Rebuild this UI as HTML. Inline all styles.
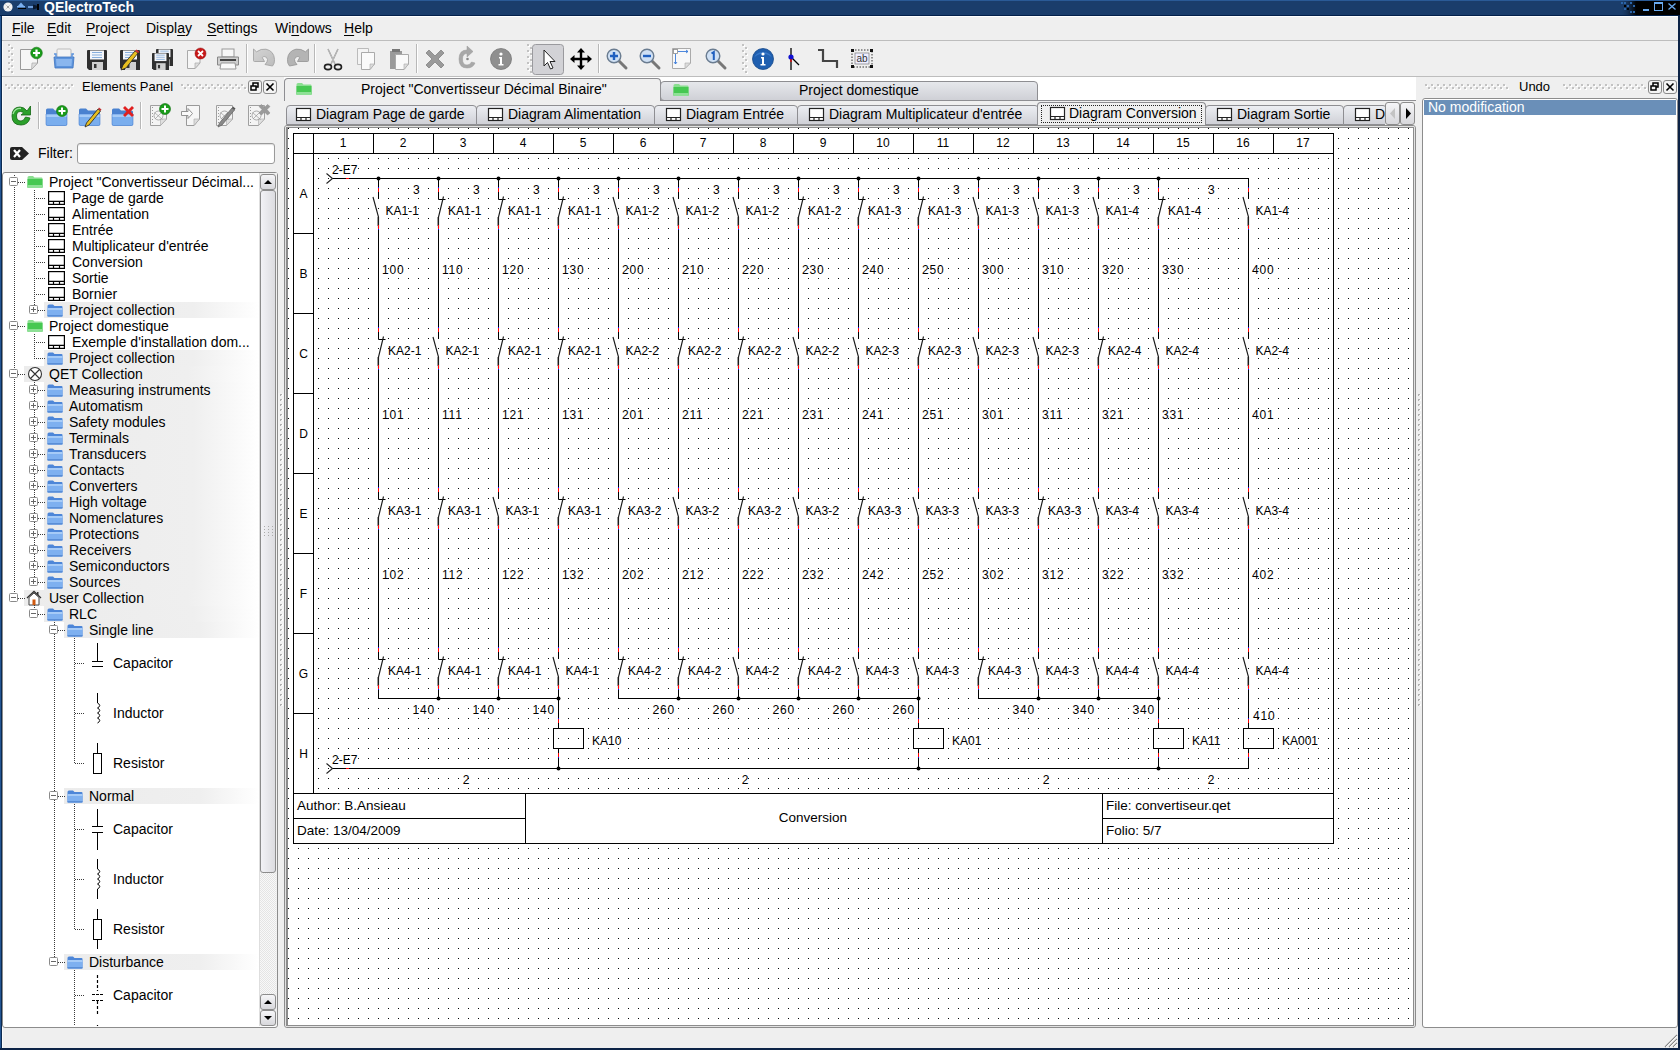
<!DOCTYPE html>
<html><head><meta charset="utf-8">
<style>
*{box-sizing:border-box}
html,body{margin:0;padding:0}
body{width:1680px;height:1050px;overflow:hidden;position:relative;background:#efefef;font-family:"Liberation Sans",sans-serif;font-size:14px;color:#000}
.a{position:absolute}
.t{position:absolute;white-space:nowrap;line-height:16px}
svg{position:absolute;overflow:visible}
.ul{text-decoration:underline;text-underline-offset:2px}
</style></head><body>
<div class="a" style="left:0px;top:0px;width:1680px;height:16px;background:#1a3d6b;border-top:1px solid #2a5a96;border-bottom:1px solid #03204a"></div><div class="a" style="left:0px;top:16px;width:1px;height:1034px;background:#245694"></div><div class="a" style="left:1px;top:16px;width:1px;height:1034px;background:#0c2a50"></div><div class="a" style="left:2px;top:41px;width:1px;height:1007px;background:#fbfbfb"></div><div class="a" style="left:1678px;top:16px;width:2px;height:1034px;background:#0c2346"></div><div class="a" style="left:0px;top:1048px;width:1680px;height:2px;background:#0c2346"></div><div class="t" style="left:44px;top:-1px;font-size:14px;color:#fff;font-weight:bold;">QElectroTech</div><svg style="left:0;top:0" width="60" height="16">
<circle cx="8" cy="7" r="4.6" fill="#f2f2f2"/>
<circle cx="8" cy="7" r="1" fill="#888"/><path d="M5.5 4.5 L6.8 5.8 M10.5 4.5 L9.2 5.8 M5.5 9.5 L6.8 8.2 M10.5 9.5 L9.2 8.2" stroke="#bbb" stroke-width="0.8"/>
<path d="M17.5 6.5 L21 2.5 L24.5 6.5 Z" fill="#7ab0f0"/><rect x="17" y="6" width="8" height="1.5" fill="#7ab0f0"/><rect x="18" y="8" width="8" height="1" fill="#000"/>
<rect x="28" y="6" width="5" height="2" fill="#6a9ad8"/><path d="M33 4.5 L38 6 V8 L33 9.5 Z" fill="#0a1a30"/><rect x="37" y="4" width="2" height="6" fill="#000"/>
</svg><svg style="left:1610px;top:0" width="70" height="16">
<defs><linearGradient id="tbg" x1="0" x2="1" y1="0" y2="0"><stop offset="0" stop-color="#1a3d6b" stop-opacity="0"/><stop offset="1" stop-color="#000"/></linearGradient></defs>
<rect x="10" y="1" width="16" height="14" fill="url(#tbg)"/>
<rect x="26" y="1" width="44" height="14" fill="#000"/>
<rect x="11" y="2" width="2" height="2" fill="#2a64a8"/><rect x="14" y="2" width="2" height="2" fill="#2a64a8"/><rect x="20" y="2" width="2" height="2" fill="#2a64a8"/>
<rect x="17" y="5" width="2" height="2" fill="#2a64a8"/><rect x="23" y="5" width="2" height="2" fill="#2a64a8"/><rect x="14" y="8" width="2" height="2" fill="#2a64a8"/>
<rect x="20" y="11" width="2" height="2" fill="#2a64a8"/><rect x="23" y="11" width="2" height="2" fill="#2a64a8"/><rect x="14" y="5" width="2" height="2" fill="#000"/><rect x="17" y="8" width="2" height="2" fill="#000"/>
<rect x="33" y="9" width="6" height="2" fill="#6aaaf0"/>
<rect x="44.5" y="2.5" width="8" height="8" fill="none" stroke="#6aaaf0" stroke-width="1"/><rect x="44" y="2" width="9" height="2" fill="#6aaaf0"/>
<path d="M58.5 3.5 L65.5 9.5 M65.5 3.5 L58.5 9.5" stroke="#6aaaf0" stroke-width="1.3"/>
</svg><div class="a" style="left:2px;top:16px;width:1676px;height:1px;background:#fff"></div><div class="a" style="left:2px;top:40px;width:1676px;height:1px;background:#bdbdbd"></div><div class="t" style="left:12px;top:20px;font-size:14px;color:#000;font-weight:normal;"><span class="ul">F</span>ile</div><div class="t" style="left:47px;top:20px;font-size:14px;color:#000;font-weight:normal;"><span class="ul">E</span>dit</div><div class="t" style="left:86px;top:20px;font-size:14px;color:#000;font-weight:normal;"><span class="ul">P</span>roject</div><div class="t" style="left:146px;top:20px;font-size:14px;color:#000;font-weight:normal;">Displ<span class="ul">a</span>y</div><div class="t" style="left:207px;top:20px;font-size:14px;color:#000;font-weight:normal;"><span class="ul">S</span>ettings</div><div class="t" style="left:275px;top:20px;font-size:14px;color:#000;font-weight:normal;">Wi<span class="ul">n</span>dows</div><div class="t" style="left:344px;top:20px;font-size:14px;color:#000;font-weight:normal;"><span class="ul">H</span>elp</div><div class="a" style="left:2px;top:76px;width:1676px;height:1px;background:#bdbdbd"></div><svg style="left:0;top:0" width="900" height="80"><g transform="translate(8,44)"><rect x="1" y="1" width="2" height="2" fill="#fff"/><rect x="0" y="0" width="2" height="2" fill="#c2c2c2"/><rect x="4" y="4" width="2" height="2" fill="#fff"/><rect x="3" y="3" width="2" height="2" fill="#c2c2c2"/><rect x="1" y="7" width="2" height="2" fill="#fff"/><rect x="0" y="6" width="2" height="2" fill="#c2c2c2"/><rect x="4" y="10" width="2" height="2" fill="#fff"/><rect x="3" y="9" width="2" height="2" fill="#c2c2c2"/><rect x="1" y="13" width="2" height="2" fill="#fff"/><rect x="0" y="12" width="2" height="2" fill="#c2c2c2"/><rect x="4" y="16" width="2" height="2" fill="#fff"/><rect x="3" y="15" width="2" height="2" fill="#c2c2c2"/><rect x="1" y="19" width="2" height="2" fill="#fff"/><rect x="0" y="18" width="2" height="2" fill="#c2c2c2"/><rect x="4" y="22" width="2" height="2" fill="#fff"/><rect x="3" y="21" width="2" height="2" fill="#c2c2c2"/><rect x="1" y="25" width="2" height="2" fill="#fff"/><rect x="0" y="24" width="2" height="2" fill="#c2c2c2"/><rect x="4" y="28" width="2" height="2" fill="#fff"/><rect x="3" y="27" width="2" height="2" fill="#c2c2c2"/></g><g transform="translate(527,44)"><rect x="1" y="1" width="2" height="2" fill="#fff"/><rect x="0" y="0" width="2" height="2" fill="#c2c2c2"/><rect x="4" y="4" width="2" height="2" fill="#fff"/><rect x="3" y="3" width="2" height="2" fill="#c2c2c2"/><rect x="1" y="7" width="2" height="2" fill="#fff"/><rect x="0" y="6" width="2" height="2" fill="#c2c2c2"/><rect x="4" y="10" width="2" height="2" fill="#fff"/><rect x="3" y="9" width="2" height="2" fill="#c2c2c2"/><rect x="1" y="13" width="2" height="2" fill="#fff"/><rect x="0" y="12" width="2" height="2" fill="#c2c2c2"/><rect x="4" y="16" width="2" height="2" fill="#fff"/><rect x="3" y="15" width="2" height="2" fill="#c2c2c2"/><rect x="1" y="19" width="2" height="2" fill="#fff"/><rect x="0" y="18" width="2" height="2" fill="#c2c2c2"/><rect x="4" y="22" width="2" height="2" fill="#fff"/><rect x="3" y="21" width="2" height="2" fill="#c2c2c2"/><rect x="1" y="25" width="2" height="2" fill="#fff"/><rect x="0" y="24" width="2" height="2" fill="#c2c2c2"/><rect x="4" y="28" width="2" height="2" fill="#fff"/><rect x="3" y="27" width="2" height="2" fill="#c2c2c2"/></g><g transform="translate(742,44)"><rect x="1" y="1" width="2" height="2" fill="#fff"/><rect x="0" y="0" width="2" height="2" fill="#c2c2c2"/><rect x="4" y="4" width="2" height="2" fill="#fff"/><rect x="3" y="3" width="2" height="2" fill="#c2c2c2"/><rect x="1" y="7" width="2" height="2" fill="#fff"/><rect x="0" y="6" width="2" height="2" fill="#c2c2c2"/><rect x="4" y="10" width="2" height="2" fill="#fff"/><rect x="3" y="9" width="2" height="2" fill="#c2c2c2"/><rect x="1" y="13" width="2" height="2" fill="#fff"/><rect x="0" y="12" width="2" height="2" fill="#c2c2c2"/><rect x="4" y="16" width="2" height="2" fill="#fff"/><rect x="3" y="15" width="2" height="2" fill="#c2c2c2"/><rect x="1" y="19" width="2" height="2" fill="#fff"/><rect x="0" y="18" width="2" height="2" fill="#c2c2c2"/><rect x="4" y="22" width="2" height="2" fill="#fff"/><rect x="3" y="21" width="2" height="2" fill="#c2c2c2"/><rect x="1" y="25" width="2" height="2" fill="#fff"/><rect x="0" y="24" width="2" height="2" fill="#c2c2c2"/><rect x="4" y="28" width="2" height="2" fill="#fff"/><rect x="3" y="27" width="2" height="2" fill="#c2c2c2"/></g><rect x="246" y="44" width="1" height="29" fill="#b8b8b8"/><rect x="247" y="44" width="1" height="29" fill="#fff"/><rect x="314" y="44" width="1" height="29" fill="#b8b8b8"/><rect x="315" y="44" width="1" height="29" fill="#fff"/><rect x="416" y="44" width="1" height="29" fill="#b8b8b8"/><rect x="417" y="44" width="1" height="29" fill="#fff"/><rect x="598" y="44" width="1" height="29" fill="#b8b8b8"/><rect x="599" y="44" width="1" height="29" fill="#fff"/><rect x="532.5" y="44.5" width="31" height="30" rx="3" fill="#d2d2d6" stroke="#9a9a9e"/><g transform="translate(19,47)"><path d="M1.5 2.5 H15 L18.5 6 V16 L12.5 22.5 H1.5 Z" fill="#f6f6f6" stroke="#999"/><path d="M12.5 22.5 L18.5 16 H13 Z" fill="#ddd" stroke="#aaa" stroke-width="0.7"/><circle cx="17.5" cy="6" r="5.8" fill="#1a9c1a" stroke="#0d6e0d" stroke-width="0.6"/><path d="M17.5 2.5 V9.5 M14 6 H21" stroke="#fff" stroke-width="2.2"/></g><g transform="translate(52,47)"><rect x="5" y="2" width="14" height="10" rx="1" fill="#f4f4f4" stroke="#bbb"/><path d="M2 10 H22 L21 21 H3 Z" fill="#5d94dc" stroke="#3f74bf" stroke-width="0.8"/><path d="M4 12 H20 L19.5 19 H4.5 Z" fill="#8ab6ee"/><path d="M2 7 H4 V12 M22 7 H20 V12" stroke="#5d94dc" stroke-width="1.5" fill="none"/></g><g transform="translate(85,47)"><g transform="translate(2,3) scale(1.0,1.0)"><path d="M0 1 Q0 0 1 0 H19 Q20 0 20 1 V20 H2 L0 18 Z" fill="#303030"/><rect x="3" y="0.5" width="14" height="9" fill="#f4f6fa"/><path d="M5 2.5 H15 M5 5 H15 M5 7.5 H15" stroke="#7aa6d8" stroke-width="0.9"/><rect x="5" y="12" width="11" height="8" fill="#d0d0d0"/><rect x="7" y="14" width="2.5" height="4" fill="#333"/></g></g><g transform="translate(118,47)"><g transform="translate(2,3) scale(1.0,1.0)"><path d="M0 1 Q0 0 1 0 H19 Q20 0 20 1 V20 H2 L0 18 Z" fill="#303030"/><rect x="3" y="0.5" width="14" height="9" fill="#f4f6fa"/><path d="M5 2.5 H15 M5 5 H15 M5 7.5 H15" stroke="#7aa6d8" stroke-width="0.9"/><rect x="5" y="12" width="11" height="8" fill="#d0d0d0"/><rect x="7" y="14" width="2.5" height="4" fill="#333"/></g><path d="M3 23 L5 18 L17 4 L20 6 L8 21 Z" fill="#e8c020" stroke="#222" stroke-width="0.8"/><path d="M17 4 L18.5 2.5 L21.5 5 L20 6 Z" fill="#d03030"/></g><g transform="translate(151,47)"><g transform="translate(5,2) scale(0.85,0.85)"><path d="M0 1 Q0 0 1 0 H19 Q20 0 20 1 V20 H2 L0 18 Z" fill="#303030"/><rect x="3" y="0.5" width="14" height="9" fill="#f4f6fa"/><path d="M5 2.5 H15 M5 5 H15 M5 7.5 H15" stroke="#7aa6d8" stroke-width="0.9"/><rect x="5" y="12" width="11" height="8" fill="#d0d0d0"/><rect x="7" y="14" width="2.5" height="4" fill="#333"/></g><g transform="translate(1,6) scale(0.85,0.85)"><path d="M0 1 Q0 0 1 0 H19 Q20 0 20 1 V20 H2 L0 18 Z" fill="#303030"/><rect x="3" y="0.5" width="14" height="9" fill="#f4f6fa"/><path d="M5 2.5 H15 M5 5 H15 M5 7.5 H15" stroke="#7aa6d8" stroke-width="0.9"/><rect x="5" y="12" width="11" height="8" fill="#d0d0d0"/><rect x="7" y="14" width="2.5" height="4" fill="#333"/></g></g><g transform="translate(185,47)"><path d="M2.5 3.5 H15 V16 L10 21.5 H2.5 Z" fill="#f6f6f6" stroke="#aaa"/><path d="M10 21.5 L15 16 H10 Z" fill="#ddd" stroke="#aaa" stroke-width="0.7"/><circle cx="15.5" cy="6.5" r="5.5" fill="#c81818" stroke="#8a0a0a" stroke-width="0.5"/><path d="M13 4 L18 9 M18 4 L13 9" stroke="#fff" stroke-width="1.8"/></g><g transform="translate(216,47)"><rect x="6" y="2" width="12" height="8" fill="#f8f8f8" stroke="#999"/><path d="M1.5 10 H22.5 V18 H1.5 Z" fill="#cfcfcf" stroke="#888"/><rect x="4" y="12" width="16" height="2" fill="#444"/><path d="M5 16 H19 L20 22 H4 Z" fill="#fafafa" stroke="#999"/></g><g transform="translate(252,47)"><defs><linearGradient id="ug" x1="0" y1="0" x2="1" y2="1"><stop offset="0" stop-color="#d4d4d4"/><stop offset="1" stop-color="#bcbcbc"/></linearGradient></defs><path d="M1.5 2 L4.5 4.8 Q9 1.5 14 2.2 Q22 4 22.5 12.5 Q22.8 16.5 20.5 19 L13 17.5 Q15.8 15 15.5 12.5 Q15 9.5 12.2 9.5 Q11 9.6 10.3 10.6 L12.5 14.5 H2.5 Q1.5 14.5 1.5 13.5 Z" fill="url(#ug)" stroke="#a4a4a4" stroke-width="0.9"/></g><g transform="translate(286,47)"><g transform="translate(24,0) scale(-1,1)"><path d="M1.5 2 L4.5 4.8 Q9 1.5 14 2.2 Q22 4 22.5 12.5 Q22.8 16.5 20.5 19 L13 17.5 Q15.8 15 15.5 12.5 Q15 9.5 12.2 9.5 Q11 9.6 10.3 10.6 L12.5 14.5 H2.5 Q1.5 14.5 1.5 13.5 Z" fill="#b4b4b4" stroke="#999" stroke-width="0.9"/></g></g><g transform="translate(321,48)"><path d="M7 1 L14 16 M17 1 L10 16" stroke="#888" stroke-width="1.4" fill="none"/><path d="M7 1 L14 16 M17 1 L10 16" stroke="#eee" stroke-width="0.5" fill="none"/><ellipse cx="7" cy="19" rx="3.5" ry="2.6" fill="none" stroke="#222" stroke-width="1.6"/><ellipse cx="17" cy="19" rx="3.5" ry="2.6" fill="none" stroke="#222" stroke-width="1.6"/></g><g transform="translate(355,47)"><path d="M2.5 1.5 H13.5 V17.5 H2.5 Z" fill="#f4f4f4" stroke="#bbb"/><path d="M6.5 5.5 H19.5 V17 L15 22.5 H6.5 Z" fill="#fafafa" stroke="#aaa"/><path d="M15 22.5 L19.5 17 H15 Z" fill="#ddd" stroke="#aaa" stroke-width="0.6"/></g><g transform="translate(388,47)"><path d="M2 4 H14 V22 H2 Z" fill="#9a9a9a"/><rect x="4" y="2" width="8" height="3" fill="#777"/><path d="M7.5 7.5 H20.5 V17 L16 22.5 H7.5 Z" fill="#fafafa" stroke="#aaa"/><path d="M16 22.5 L20.5 17 H16 Z" fill="#ddd" stroke="#aaa" stroke-width="0.6"/></g><g transform="translate(423,47)"><path d="M3 6 L6 3 L12 9 L18 3 L21 6 L15 12 L21 18 L18 21 L12 15 L6 21 L3 18 L9 12 Z" fill="#9a9a9a" stroke="#7a7a7a" stroke-width="0.7"/></g><g transform="translate(455,47)"><path d="M12 3 Q4 3 4 12 Q4 21 12 21 Q18 21 20 16 L16.5 15 Q15 18 12 18 Q7.5 18 7.5 12 Q7.5 6.5 12 6.5 L12 10 L18 4.5 L12 -1 Z" fill="#a8a8a8" stroke="#999" stroke-width="0.5"/><circle cx="12.5" cy="12" r="1.3" fill="#888"/></g><g transform="translate(489,47)"><circle cx="12" cy="12" r="10.5" fill="#8f8f8f" stroke="#777" stroke-width="0.8"/><circle cx="12" cy="7" r="1.6" fill="#fff"/><path d="M10 10 H13 V17 H14.5 V18.5 H9.5 V17 H11 V11.5 H10 Z" fill="#fff"/></g><g transform="translate(536,47)"><path d="M8 3 V19 L11.5 15.5 L14.5 22 L17 21 L14 14.5 L19 14.5 Z" fill="#fff" stroke="#222" stroke-width="1"/></g><g transform="translate(569,47)"><path d="M12 1 L16 5.5 H13.2 V10.8 H18.5 V8 L23 12 L18.5 16 V13.2 H13.2 V18.5 H16 L12 23 L8 18.5 H10.8 V13.2 H5.5 V16 L1 12 L5.5 8 V10.8 H10.8 V5.5 H8 Z" fill="#000"/></g><g transform="translate(605,47)"><path d="M13 13 L21 21" stroke="#777" stroke-width="3" stroke-linecap="round"/><circle cx="9" cy="9" r="6.8" fill="#cfe0f4" stroke="#6a7c90" stroke-width="1.4"/><path d="M9 5 V13 M5 9 H13" stroke="#2060c0" stroke-width="2.4"/></g><g transform="translate(638,47)"><path d="M13 13 L21 21" stroke="#777" stroke-width="3" stroke-linecap="round"/><circle cx="9" cy="9" r="6.8" fill="#cfe0f4" stroke="#6a7c90" stroke-width="1.4"/><path d="M5 9 H13" stroke="#2060c0" stroke-width="2.4"/></g><g transform="translate(671,47)"><path d="M1.5 1.5 H19.5 V16 L14 21.5 H1.5 Z" fill="#f8f8f8" stroke="#aaa"/><path d="M14 21.5 L19.5 16 H14 Z" fill="#ddd" stroke="#aaa" stroke-width="0.6"/><rect x="2.5" y="2.5" width="4" height="4" fill="#fff" stroke="#888" stroke-width="0.8"/><path d="M7 4.5 H17 M15 3 L17 4.5 L15 6 M4.5 7 V17 M3 15 L4.5 17 L6 15" stroke="#3a7ad8" stroke-width="0.9" fill="none"/></g><g transform="translate(704,47)"><path d="M13 13 L21 21" stroke="#777" stroke-width="3" stroke-linecap="round"/><circle cx="9" cy="9" r="6.8" fill="#cfe0f4" stroke="#6a7c90" stroke-width="1.4"/><path d="M7.5 6.5 L9.8 5 V13" stroke="#2060c0" stroke-width="2" fill="none"/></g><g transform="translate(751,47)"><circle cx="12" cy="12" r="10.5" fill="#1f5fb0" stroke="#184a8a" stroke-width="0.8"/><path d="M3 12 A9 7 0 0 1 21 12 A9 5 0 0 0 3 12" fill="#4a88d8" opacity="0.6"/><circle cx="12" cy="7" r="1.6" fill="#fff"/><path d="M10 10 H13 V17 H14.5 V18.5 H9.5 V17 H11 V11.5 H10 Z" fill="#fff"/></g><g transform="translate(784,47)"><path d="M7 1 V23" stroke="#000" stroke-width="1.3"/><path d="M7 10 L15 18" stroke="#000" stroke-width="1.3"/><circle cx="7" cy="10" r="2.6" fill="#1010d0"/><path d="M7 12 V15" stroke="#e00" stroke-width="1.3"/></g><g transform="translate(817,47)"><path d="M1 3 H6 V14 H20 V21" stroke="#444" stroke-width="2.2" fill="none"/></g><g transform="translate(850,47)"><rect x="2" y="3" width="20" height="17" fill="none" stroke="#333" stroke-width="1" stroke-dasharray="1.5,1.5"/><rect x="1" y="2" width="3" height="3" fill="#111"/><rect x="20" y="2" width="3" height="3" fill="#111"/><rect x="1" y="18" width="3" height="3" fill="#111"/><rect x="20" y="18" width="3" height="3" fill="#111"/><rect x="5" y="6" width="14" height="11" fill="#eef" stroke="#666" stroke-width="0.6"/><text x="12" y="15" font-family="Liberation Sans" font-size="10" text-anchor="middle" fill="#333">ab</text></g></svg><svg style="left:0;top:0" width="290" height="175"><rect x="6" y="85" width="2" height="2" fill="#fff"/><rect x="5" y="84" width="2" height="2" fill="#c2c2c2"/><rect x="9" y="88" width="2" height="2" fill="#fff"/><rect x="8" y="87" width="2" height="2" fill="#c2c2c2"/><rect x="12" y="85" width="2" height="2" fill="#fff"/><rect x="11" y="84" width="2" height="2" fill="#c2c2c2"/><rect x="15" y="88" width="2" height="2" fill="#fff"/><rect x="14" y="87" width="2" height="2" fill="#c2c2c2"/><rect x="18" y="85" width="2" height="2" fill="#fff"/><rect x="17" y="84" width="2" height="2" fill="#c2c2c2"/><rect x="21" y="88" width="2" height="2" fill="#fff"/><rect x="20" y="87" width="2" height="2" fill="#c2c2c2"/><rect x="24" y="85" width="2" height="2" fill="#fff"/><rect x="23" y="84" width="2" height="2" fill="#c2c2c2"/><rect x="27" y="88" width="2" height="2" fill="#fff"/><rect x="26" y="87" width="2" height="2" fill="#c2c2c2"/><rect x="30" y="85" width="2" height="2" fill="#fff"/><rect x="29" y="84" width="2" height="2" fill="#c2c2c2"/><rect x="33" y="88" width="2" height="2" fill="#fff"/><rect x="32" y="87" width="2" height="2" fill="#c2c2c2"/><rect x="36" y="85" width="2" height="2" fill="#fff"/><rect x="35" y="84" width="2" height="2" fill="#c2c2c2"/><rect x="39" y="88" width="2" height="2" fill="#fff"/><rect x="38" y="87" width="2" height="2" fill="#c2c2c2"/><rect x="42" y="85" width="2" height="2" fill="#fff"/><rect x="41" y="84" width="2" height="2" fill="#c2c2c2"/><rect x="45" y="88" width="2" height="2" fill="#fff"/><rect x="44" y="87" width="2" height="2" fill="#c2c2c2"/><rect x="48" y="85" width="2" height="2" fill="#fff"/><rect x="47" y="84" width="2" height="2" fill="#c2c2c2"/><rect x="51" y="88" width="2" height="2" fill="#fff"/><rect x="50" y="87" width="2" height="2" fill="#c2c2c2"/><rect x="54" y="85" width="2" height="2" fill="#fff"/><rect x="53" y="84" width="2" height="2" fill="#c2c2c2"/><rect x="57" y="88" width="2" height="2" fill="#fff"/><rect x="56" y="87" width="2" height="2" fill="#c2c2c2"/><rect x="60" y="85" width="2" height="2" fill="#fff"/><rect x="59" y="84" width="2" height="2" fill="#c2c2c2"/><rect x="63" y="88" width="2" height="2" fill="#fff"/><rect x="62" y="87" width="2" height="2" fill="#c2c2c2"/><rect x="66" y="85" width="2" height="2" fill="#fff"/><rect x="65" y="84" width="2" height="2" fill="#c2c2c2"/><rect x="69" y="88" width="2" height="2" fill="#fff"/><rect x="68" y="87" width="2" height="2" fill="#c2c2c2"/><rect x="72" y="85" width="2" height="2" fill="#fff"/><rect x="71" y="84" width="2" height="2" fill="#c2c2c2"/><rect x="182" y="85" width="2" height="2" fill="#fff"/><rect x="181" y="84" width="2" height="2" fill="#c2c2c2"/><rect x="185" y="88" width="2" height="2" fill="#fff"/><rect x="184" y="87" width="2" height="2" fill="#c2c2c2"/><rect x="188" y="85" width="2" height="2" fill="#fff"/><rect x="187" y="84" width="2" height="2" fill="#c2c2c2"/><rect x="191" y="88" width="2" height="2" fill="#fff"/><rect x="190" y="87" width="2" height="2" fill="#c2c2c2"/><rect x="194" y="85" width="2" height="2" fill="#fff"/><rect x="193" y="84" width="2" height="2" fill="#c2c2c2"/><rect x="197" y="88" width="2" height="2" fill="#fff"/><rect x="196" y="87" width="2" height="2" fill="#c2c2c2"/><rect x="200" y="85" width="2" height="2" fill="#fff"/><rect x="199" y="84" width="2" height="2" fill="#c2c2c2"/><rect x="203" y="88" width="2" height="2" fill="#fff"/><rect x="202" y="87" width="2" height="2" fill="#c2c2c2"/><rect x="206" y="85" width="2" height="2" fill="#fff"/><rect x="205" y="84" width="2" height="2" fill="#c2c2c2"/><rect x="209" y="88" width="2" height="2" fill="#fff"/><rect x="208" y="87" width="2" height="2" fill="#c2c2c2"/><rect x="212" y="85" width="2" height="2" fill="#fff"/><rect x="211" y="84" width="2" height="2" fill="#c2c2c2"/><rect x="215" y="88" width="2" height="2" fill="#fff"/><rect x="214" y="87" width="2" height="2" fill="#c2c2c2"/><rect x="218" y="85" width="2" height="2" fill="#fff"/><rect x="217" y="84" width="2" height="2" fill="#c2c2c2"/><rect x="221" y="88" width="2" height="2" fill="#fff"/><rect x="220" y="87" width="2" height="2" fill="#c2c2c2"/><rect x="224" y="85" width="2" height="2" fill="#fff"/><rect x="223" y="84" width="2" height="2" fill="#c2c2c2"/><rect x="227" y="88" width="2" height="2" fill="#fff"/><rect x="226" y="87" width="2" height="2" fill="#c2c2c2"/><rect x="230" y="85" width="2" height="2" fill="#fff"/><rect x="229" y="84" width="2" height="2" fill="#c2c2c2"/><rect x="233" y="88" width="2" height="2" fill="#fff"/><rect x="232" y="87" width="2" height="2" fill="#c2c2c2"/><rect x="236" y="85" width="2" height="2" fill="#fff"/><rect x="235" y="84" width="2" height="2" fill="#c2c2c2"/><rect x="239" y="88" width="2" height="2" fill="#fff"/><rect x="238" y="87" width="2" height="2" fill="#c2c2c2"/><rect x="242" y="85" width="2" height="2" fill="#fff"/><rect x="241" y="84" width="2" height="2" fill="#c2c2c2"/><rect x="245" y="88" width="2" height="2" fill="#fff"/><rect x="244" y="87" width="2" height="2" fill="#c2c2c2"/><g transform="translate(248,80)"><rect x="0.5" y="0.5" width="13" height="13" rx="2.5" fill="#f4f4f4" stroke="#8a8a8a"/><rect x="5" y="3" width="5" height="4" fill="none" stroke="#000" stroke-width="1.5"/><rect x="3" y="6" width="5" height="4" fill="#f4f4f4" stroke="#000" stroke-width="1.5"/></g><g transform="translate(263,80)"><rect x="0.5" y="0.5" width="13" height="13" rx="2.5" fill="#f4f4f4" stroke="#8a8a8a"/><path d="M3.5 3.5 L10.5 10.5 M10.5 3.5 L3.5 10.5" stroke="#000" stroke-width="1.6"/></g><g transform="translate(9,104)"><path d="M18 7 Q15 3 11 3 Q3 3 3 12 Q3 21 12 21 Q19 21 21 14 L16.5 13 Q15 17 12 17 Q7.5 17 7.5 12 Q7.5 7.5 11.5 7.5 Q13.5 7.5 14.5 9 L12 11 H21.5 V2 Z" fill="#2aa02a" stroke="#116611" stroke-width="0.8"/><path d="M4 10 Q6 4 12 4.5" stroke="#9fe39f" stroke-width="1.3" fill="none"/></g><rect x="38" y="102" width="1" height="27" fill="#b8b8b8"/><rect x="39" y="102" width="1" height="27" fill="#fff"/><g transform="translate(45,104)"><path d="M1 6 Q1 4.5 2.5 4.5 H8 L10 6.5 H20.5 Q22 6.5 22 8 V20 Q22 21.5 20.5 21.5 H2.5 Q1 21.5 1 20 Z" fill="#4a82d0"/><path d="M1 10 H22 V20 Q22 21.5 20.5 21.5 H2.5 Q1 21.5 1 20 Z" fill="#7aaeee" stroke="#4a82d0" stroke-width="0.6"/><path d="M1.5 10.5 H21.5 V13 H1.5 Z" fill="#a6cbf7"/><circle cx="17" cy="7" r="5.5" fill="#1a9c1a" stroke="#0d6e0d" stroke-width="0.6"/><path d="M17 3.5 V10.5 M13.5 7 H20.5" stroke="#fff" stroke-width="2"/></g><g transform="translate(78,104)"><path d="M1 6 Q1 4.5 2.5 4.5 H8 L10 6.5 H20.5 Q22 6.5 22 8 V20 Q22 21.5 20.5 21.5 H2.5 Q1 21.5 1 20 Z" fill="#4a82d0"/><path d="M1 10 H22 V20 Q22 21.5 20.5 21.5 H2.5 Q1 21.5 1 20 Z" fill="#7aaeee" stroke="#4a82d0" stroke-width="0.6"/><path d="M1.5 10.5 H21.5 V13 H1.5 Z" fill="#a6cbf7"/><path d="M7 23 L8.5 19 L20 5 L22.5 7 L11 21 Z" fill="#e8c020" stroke="#222" stroke-width="0.8"/><path d="M20 5 L21 3.5 L23.5 5.5 L22.5 7 Z" fill="#c03030"/></g><g transform="translate(111,104)"><path d="M1 6 Q1 4.5 2.5 4.5 H8 L10 6.5 H20.5 Q22 6.5 22 8 V20 Q22 21.5 20.5 21.5 H2.5 Q1 21.5 1 20 Z" fill="#4a82d0"/><path d="M1 10 H22 V20 Q22 21.5 20.5 21.5 H2.5 Q1 21.5 1 20 Z" fill="#7aaeee" stroke="#4a82d0" stroke-width="0.6"/><path d="M1.5 10.5 H21.5 V13 H1.5 Z" fill="#a6cbf7"/><path d="M14 2 L17.5 5.5 L21 2 L23 4 L19.5 7.5 L23 11 L21 13 L17.5 9.5 L14 13 L12 11 L15.5 7.5 L12 4 Z" fill="#e02020"/></g><rect x="140" y="102" width="1" height="27" fill="#b8b8b8"/><rect x="141" y="102" width="1" height="27" fill="#fff"/><g transform="translate(149,104)"><path d="M1.5 1.5 H17.5 V15 L11.5 21.5 H1.5 Z" fill="#f4f4f4" stroke="#a0a0a0"/><path d="M11.5 21.5 L17.5 15 H11.5 Z" fill="#e0e0e0" stroke="#aaa" stroke-width="0.6"/><path d="M3.5 3 V20" stroke="#999" stroke-dasharray="1,2"/><circle cx="9.5" cy="11.5" r="4.5" fill="none" stroke="#999" stroke-width="0.8"/><path d="M5.5 8.5 L13.5 15.5 M6 15 L13 8" stroke="#999" stroke-width="0.7"/><circle cx="16" cy="5" r="5.5" fill="#1a9c1a" stroke="#0d6e0d" stroke-width="0.6"/><path d="M16 1.5 V8.5 M12.5 5 H19.5" stroke="#fff" stroke-width="2"/></g><g transform="translate(180,104)"><path d="M6.5 1.5 H19.5 V15 L14 21.5 H6.5 Z" fill="#f6f6f6" stroke="#999"/><path d="M14 21.5 L19.5 15 H14 Z" fill="#ddd" stroke="#aaa" stroke-width="0.6"/><path d="M1.5 7.5 H8 V4.5 L12.5 9.5 L8 14.5 V11.5 H1.5 Z" fill="#fafafa" stroke="#888" stroke-width="0.9"/></g><g transform="translate(215,104)"><path d="M1.5 1.5 H17.5 V15 L11.5 21.5 H1.5 Z" fill="#f4f4f4" stroke="#a0a0a0"/><path d="M11.5 21.5 L17.5 15 H11.5 Z" fill="#e0e0e0" stroke="#aaa" stroke-width="0.6"/><path d="M3.5 3 V20" stroke="#999" stroke-dasharray="1,2"/><circle cx="9.5" cy="11.5" r="4.5" fill="none" stroke="#999" stroke-width="0.8"/><path d="M5.5 8.5 L13.5 15.5 M6 15 L13 8" stroke="#999" stroke-width="0.7"/><path d="M3 23 L4.5 19 L17 4 L19.5 6 L7 21 Z" fill="#8a8a8a" stroke="#666" stroke-width="0.8"/><path d="M17 4 L18 2.5 L20.5 4.5 L19.5 6 Z" fill="#555"/></g><g transform="translate(247,104)"><path d="M1.5 1.5 H17.5 V15 L11.5 21.5 H1.5 Z" fill="#f4f4f4" stroke="#a0a0a0"/><path d="M11.5 21.5 L17.5 15 H11.5 Z" fill="#e0e0e0" stroke="#aaa" stroke-width="0.6"/><path d="M3.5 3 V20" stroke="#999" stroke-dasharray="1,2"/><circle cx="9.5" cy="11.5" r="4.5" fill="none" stroke="#999" stroke-width="0.8"/><path d="M5.5 8.5 L13.5 15.5 M6 15 L13 8" stroke="#999" stroke-width="0.7"/><path d="M12 2.5 L14.5 0.5 L17.5 3.5 L20.5 0.5 L23 2.5 L20 5.5 L23 9 L20.5 11 L17.5 8 L14.5 11 L12 9 L15 5.5 Z" fill="#9a9a9a" stroke="#888" stroke-width="0.5"/></g><g transform="translate(9,146)"><path d="M1 3 Q1 1 3 1 H13 L20 7.5 L13 14 H3 Q1 14 1 12 Z" fill="#222"/><path d="M5 4 L11 11 M11 4 L5 11" stroke="#fff" stroke-width="2.2"/></g></svg><div class="t" style="left:82px;top:79px;font-size:13px;color:#000;font-weight:normal;">Elements Panel</div><div class="t" style="left:38px;top:145px;font-size:14px;color:#000;font-weight:normal;">Filter:</div><div class="a" style="left:77px;top:143px;width:198px;height:21px;background:#fff;border:1px solid #9a9a9a;border-radius:3px;box-shadow:inset 0 1px 1px #ddd"></div><div class="a" style="left:2px;top:172px;width:276px;height:856px;background:#fff;border:1px solid #8c8c8c;border-radius:3px"></div><div class="a" style="left:278px;top:393px;width:6px;height:313px;background:#f3f3f3"></div><svg style="left:278px;top:393px" width="6" height="313"><rect x="2" y="1" width="2" height="1" fill="#b0b0b0"/><rect x="2" y="2" width="1" height="1" fill="#b0b0b0"/><rect x="4" y="1" width="1" height="2" fill="#fff"/><rect x="2" y="6" width="2" height="1" fill="#b0b0b0"/><rect x="2" y="7" width="1" height="1" fill="#b0b0b0"/><rect x="4" y="6" width="1" height="2" fill="#fff"/><rect x="2" y="11" width="2" height="1" fill="#b0b0b0"/><rect x="2" y="12" width="1" height="1" fill="#b0b0b0"/><rect x="4" y="11" width="1" height="2" fill="#fff"/><rect x="2" y="16" width="2" height="1" fill="#b0b0b0"/><rect x="2" y="17" width="1" height="1" fill="#b0b0b0"/><rect x="4" y="16" width="1" height="2" fill="#fff"/><rect x="2" y="21" width="2" height="1" fill="#b0b0b0"/><rect x="2" y="22" width="1" height="1" fill="#b0b0b0"/><rect x="4" y="21" width="1" height="2" fill="#fff"/><rect x="2" y="26" width="2" height="1" fill="#b0b0b0"/><rect x="2" y="27" width="1" height="1" fill="#b0b0b0"/><rect x="4" y="26" width="1" height="2" fill="#fff"/><rect x="2" y="31" width="2" height="1" fill="#b0b0b0"/><rect x="2" y="32" width="1" height="1" fill="#b0b0b0"/><rect x="4" y="31" width="1" height="2" fill="#fff"/><rect x="2" y="36" width="2" height="1" fill="#b0b0b0"/><rect x="2" y="37" width="1" height="1" fill="#b0b0b0"/><rect x="4" y="36" width="1" height="2" fill="#fff"/><rect x="2" y="41" width="2" height="1" fill="#b0b0b0"/><rect x="2" y="42" width="1" height="1" fill="#b0b0b0"/><rect x="4" y="41" width="1" height="2" fill="#fff"/><rect x="2" y="46" width="2" height="1" fill="#b0b0b0"/><rect x="2" y="47" width="1" height="1" fill="#b0b0b0"/><rect x="4" y="46" width="1" height="2" fill="#fff"/><rect x="2" y="51" width="2" height="1" fill="#b0b0b0"/><rect x="2" y="52" width="1" height="1" fill="#b0b0b0"/><rect x="4" y="51" width="1" height="2" fill="#fff"/><rect x="2" y="56" width="2" height="1" fill="#b0b0b0"/><rect x="2" y="57" width="1" height="1" fill="#b0b0b0"/><rect x="4" y="56" width="1" height="2" fill="#fff"/><rect x="2" y="61" width="2" height="1" fill="#b0b0b0"/><rect x="2" y="62" width="1" height="1" fill="#b0b0b0"/><rect x="4" y="61" width="1" height="2" fill="#fff"/><rect x="2" y="66" width="2" height="1" fill="#b0b0b0"/><rect x="2" y="67" width="1" height="1" fill="#b0b0b0"/><rect x="4" y="66" width="1" height="2" fill="#fff"/><rect x="2" y="71" width="2" height="1" fill="#b0b0b0"/><rect x="2" y="72" width="1" height="1" fill="#b0b0b0"/><rect x="4" y="71" width="1" height="2" fill="#fff"/><rect x="2" y="76" width="2" height="1" fill="#b0b0b0"/><rect x="2" y="77" width="1" height="1" fill="#b0b0b0"/><rect x="4" y="76" width="1" height="2" fill="#fff"/><rect x="2" y="81" width="2" height="1" fill="#b0b0b0"/><rect x="2" y="82" width="1" height="1" fill="#b0b0b0"/><rect x="4" y="81" width="1" height="2" fill="#fff"/><rect x="2" y="86" width="2" height="1" fill="#b0b0b0"/><rect x="2" y="87" width="1" height="1" fill="#b0b0b0"/><rect x="4" y="86" width="1" height="2" fill="#fff"/><rect x="2" y="91" width="2" height="1" fill="#b0b0b0"/><rect x="2" y="92" width="1" height="1" fill="#b0b0b0"/><rect x="4" y="91" width="1" height="2" fill="#fff"/><rect x="2" y="96" width="2" height="1" fill="#b0b0b0"/><rect x="2" y="97" width="1" height="1" fill="#b0b0b0"/><rect x="4" y="96" width="1" height="2" fill="#fff"/><rect x="2" y="101" width="2" height="1" fill="#b0b0b0"/><rect x="2" y="102" width="1" height="1" fill="#b0b0b0"/><rect x="4" y="101" width="1" height="2" fill="#fff"/><rect x="2" y="106" width="2" height="1" fill="#b0b0b0"/><rect x="2" y="107" width="1" height="1" fill="#b0b0b0"/><rect x="4" y="106" width="1" height="2" fill="#fff"/><rect x="2" y="111" width="2" height="1" fill="#b0b0b0"/><rect x="2" y="112" width="1" height="1" fill="#b0b0b0"/><rect x="4" y="111" width="1" height="2" fill="#fff"/><rect x="2" y="116" width="2" height="1" fill="#b0b0b0"/><rect x="2" y="117" width="1" height="1" fill="#b0b0b0"/><rect x="4" y="116" width="1" height="2" fill="#fff"/><rect x="2" y="121" width="2" height="1" fill="#b0b0b0"/><rect x="2" y="122" width="1" height="1" fill="#b0b0b0"/><rect x="4" y="121" width="1" height="2" fill="#fff"/><rect x="2" y="126" width="2" height="1" fill="#b0b0b0"/><rect x="2" y="127" width="1" height="1" fill="#b0b0b0"/><rect x="4" y="126" width="1" height="2" fill="#fff"/><rect x="2" y="131" width="2" height="1" fill="#b0b0b0"/><rect x="2" y="132" width="1" height="1" fill="#b0b0b0"/><rect x="4" y="131" width="1" height="2" fill="#fff"/><rect x="2" y="136" width="2" height="1" fill="#b0b0b0"/><rect x="2" y="137" width="1" height="1" fill="#b0b0b0"/><rect x="4" y="136" width="1" height="2" fill="#fff"/><rect x="2" y="141" width="2" height="1" fill="#b0b0b0"/><rect x="2" y="142" width="1" height="1" fill="#b0b0b0"/><rect x="4" y="141" width="1" height="2" fill="#fff"/><rect x="2" y="146" width="2" height="1" fill="#b0b0b0"/><rect x="2" y="147" width="1" height="1" fill="#b0b0b0"/><rect x="4" y="146" width="1" height="2" fill="#fff"/><rect x="2" y="151" width="2" height="1" fill="#b0b0b0"/><rect x="2" y="152" width="1" height="1" fill="#b0b0b0"/><rect x="4" y="151" width="1" height="2" fill="#fff"/><rect x="2" y="156" width="2" height="1" fill="#b0b0b0"/><rect x="2" y="157" width="1" height="1" fill="#b0b0b0"/><rect x="4" y="156" width="1" height="2" fill="#fff"/><rect x="2" y="161" width="2" height="1" fill="#b0b0b0"/><rect x="2" y="162" width="1" height="1" fill="#b0b0b0"/><rect x="4" y="161" width="1" height="2" fill="#fff"/><rect x="2" y="166" width="2" height="1" fill="#b0b0b0"/><rect x="2" y="167" width="1" height="1" fill="#b0b0b0"/><rect x="4" y="166" width="1" height="2" fill="#fff"/><rect x="2" y="171" width="2" height="1" fill="#b0b0b0"/><rect x="2" y="172" width="1" height="1" fill="#b0b0b0"/><rect x="4" y="171" width="1" height="2" fill="#fff"/><rect x="2" y="176" width="2" height="1" fill="#b0b0b0"/><rect x="2" y="177" width="1" height="1" fill="#b0b0b0"/><rect x="4" y="176" width="1" height="2" fill="#fff"/><rect x="2" y="181" width="2" height="1" fill="#b0b0b0"/><rect x="2" y="182" width="1" height="1" fill="#b0b0b0"/><rect x="4" y="181" width="1" height="2" fill="#fff"/><rect x="2" y="186" width="2" height="1" fill="#b0b0b0"/><rect x="2" y="187" width="1" height="1" fill="#b0b0b0"/><rect x="4" y="186" width="1" height="2" fill="#fff"/><rect x="2" y="191" width="2" height="1" fill="#b0b0b0"/><rect x="2" y="192" width="1" height="1" fill="#b0b0b0"/><rect x="4" y="191" width="1" height="2" fill="#fff"/><rect x="2" y="196" width="2" height="1" fill="#b0b0b0"/><rect x="2" y="197" width="1" height="1" fill="#b0b0b0"/><rect x="4" y="196" width="1" height="2" fill="#fff"/><rect x="2" y="201" width="2" height="1" fill="#b0b0b0"/><rect x="2" y="202" width="1" height="1" fill="#b0b0b0"/><rect x="4" y="201" width="1" height="2" fill="#fff"/><rect x="2" y="206" width="2" height="1" fill="#b0b0b0"/><rect x="2" y="207" width="1" height="1" fill="#b0b0b0"/><rect x="4" y="206" width="1" height="2" fill="#fff"/><rect x="2" y="211" width="2" height="1" fill="#b0b0b0"/><rect x="2" y="212" width="1" height="1" fill="#b0b0b0"/><rect x="4" y="211" width="1" height="2" fill="#fff"/><rect x="2" y="216" width="2" height="1" fill="#b0b0b0"/><rect x="2" y="217" width="1" height="1" fill="#b0b0b0"/><rect x="4" y="216" width="1" height="2" fill="#fff"/><rect x="2" y="221" width="2" height="1" fill="#b0b0b0"/><rect x="2" y="222" width="1" height="1" fill="#b0b0b0"/><rect x="4" y="221" width="1" height="2" fill="#fff"/><rect x="2" y="226" width="2" height="1" fill="#b0b0b0"/><rect x="2" y="227" width="1" height="1" fill="#b0b0b0"/><rect x="4" y="226" width="1" height="2" fill="#fff"/><rect x="2" y="231" width="2" height="1" fill="#b0b0b0"/><rect x="2" y="232" width="1" height="1" fill="#b0b0b0"/><rect x="4" y="231" width="1" height="2" fill="#fff"/><rect x="2" y="236" width="2" height="1" fill="#b0b0b0"/><rect x="2" y="237" width="1" height="1" fill="#b0b0b0"/><rect x="4" y="236" width="1" height="2" fill="#fff"/><rect x="2" y="241" width="2" height="1" fill="#b0b0b0"/><rect x="2" y="242" width="1" height="1" fill="#b0b0b0"/><rect x="4" y="241" width="1" height="2" fill="#fff"/><rect x="2" y="246" width="2" height="1" fill="#b0b0b0"/><rect x="2" y="247" width="1" height="1" fill="#b0b0b0"/><rect x="4" y="246" width="1" height="2" fill="#fff"/><rect x="2" y="251" width="2" height="1" fill="#b0b0b0"/><rect x="2" y="252" width="1" height="1" fill="#b0b0b0"/><rect x="4" y="251" width="1" height="2" fill="#fff"/><rect x="2" y="256" width="2" height="1" fill="#b0b0b0"/><rect x="2" y="257" width="1" height="1" fill="#b0b0b0"/><rect x="4" y="256" width="1" height="2" fill="#fff"/><rect x="2" y="261" width="2" height="1" fill="#b0b0b0"/><rect x="2" y="262" width="1" height="1" fill="#b0b0b0"/><rect x="4" y="261" width="1" height="2" fill="#fff"/><rect x="2" y="266" width="2" height="1" fill="#b0b0b0"/><rect x="2" y="267" width="1" height="1" fill="#b0b0b0"/><rect x="4" y="266" width="1" height="2" fill="#fff"/><rect x="2" y="271" width="2" height="1" fill="#b0b0b0"/><rect x="2" y="272" width="1" height="1" fill="#b0b0b0"/><rect x="4" y="271" width="1" height="2" fill="#fff"/><rect x="2" y="276" width="2" height="1" fill="#b0b0b0"/><rect x="2" y="277" width="1" height="1" fill="#b0b0b0"/><rect x="4" y="276" width="1" height="2" fill="#fff"/><rect x="2" y="281" width="2" height="1" fill="#b0b0b0"/><rect x="2" y="282" width="1" height="1" fill="#b0b0b0"/><rect x="4" y="281" width="1" height="2" fill="#fff"/><rect x="2" y="286" width="2" height="1" fill="#b0b0b0"/><rect x="2" y="287" width="1" height="1" fill="#b0b0b0"/><rect x="4" y="286" width="1" height="2" fill="#fff"/><rect x="2" y="291" width="2" height="1" fill="#b0b0b0"/><rect x="2" y="292" width="1" height="1" fill="#b0b0b0"/><rect x="4" y="291" width="1" height="2" fill="#fff"/><rect x="2" y="296" width="2" height="1" fill="#b0b0b0"/><rect x="2" y="297" width="1" height="1" fill="#b0b0b0"/><rect x="4" y="296" width="1" height="2" fill="#fff"/><rect x="2" y="301" width="2" height="1" fill="#b0b0b0"/><rect x="2" y="302" width="1" height="1" fill="#b0b0b0"/><rect x="4" y="301" width="1" height="2" fill="#fff"/><rect x="2" y="306" width="2" height="1" fill="#b0b0b0"/><rect x="2" y="307" width="1" height="1" fill="#b0b0b0"/><rect x="4" y="306" width="1" height="2" fill="#fff"/><rect x="2" y="311" width="2" height="1" fill="#b0b0b0"/><rect x="2" y="312" width="1" height="1" fill="#b0b0b0"/><rect x="4" y="311" width="1" height="2" fill="#fff"/></svg><div class="a" style="left:44px;top:302px;width:215px;height:16px;background:linear-gradient(to right,#ececec 0%,#efefef 70%,#ffffff 100%)"></div><div class="a" style="left:44px;top:350px;width:215px;height:16px;background:linear-gradient(to right,#ececec 0%,#efefef 70%,#ffffff 100%)"></div><div class="a" style="left:24px;top:366px;width:235px;height:16px;background:linear-gradient(to right,#ececec 0%,#efefef 70%,#ffffff 100%)"></div><div class="a" style="left:44px;top:382px;width:215px;height:16px;background:linear-gradient(to right,#ececec 0%,#efefef 70%,#ffffff 100%)"></div><div class="a" style="left:44px;top:398px;width:215px;height:16px;background:linear-gradient(to right,#ececec 0%,#efefef 70%,#ffffff 100%)"></div><div class="a" style="left:44px;top:414px;width:215px;height:16px;background:linear-gradient(to right,#ececec 0%,#efefef 70%,#ffffff 100%)"></div><div class="a" style="left:44px;top:430px;width:215px;height:16px;background:linear-gradient(to right,#ececec 0%,#efefef 70%,#ffffff 100%)"></div><div class="a" style="left:44px;top:446px;width:215px;height:16px;background:linear-gradient(to right,#ececec 0%,#efefef 70%,#ffffff 100%)"></div><div class="a" style="left:44px;top:462px;width:215px;height:16px;background:linear-gradient(to right,#ececec 0%,#efefef 70%,#ffffff 100%)"></div><div class="a" style="left:44px;top:478px;width:215px;height:16px;background:linear-gradient(to right,#ececec 0%,#efefef 70%,#ffffff 100%)"></div><div class="a" style="left:44px;top:494px;width:215px;height:16px;background:linear-gradient(to right,#ececec 0%,#efefef 70%,#ffffff 100%)"></div><div class="a" style="left:44px;top:510px;width:215px;height:16px;background:linear-gradient(to right,#ececec 0%,#efefef 70%,#ffffff 100%)"></div><div class="a" style="left:44px;top:526px;width:215px;height:16px;background:linear-gradient(to right,#ececec 0%,#efefef 70%,#ffffff 100%)"></div><div class="a" style="left:44px;top:542px;width:215px;height:16px;background:linear-gradient(to right,#ececec 0%,#efefef 70%,#ffffff 100%)"></div><div class="a" style="left:44px;top:558px;width:215px;height:16px;background:linear-gradient(to right,#ececec 0%,#efefef 70%,#ffffff 100%)"></div><div class="a" style="left:44px;top:574px;width:215px;height:16px;background:linear-gradient(to right,#ececec 0%,#efefef 70%,#ffffff 100%)"></div><div class="a" style="left:24px;top:590px;width:235px;height:16px;background:linear-gradient(to right,#ececec 0%,#efefef 70%,#ffffff 100%)"></div><div class="a" style="left:44px;top:606px;width:215px;height:16px;background:linear-gradient(to right,#ececec 0%,#efefef 70%,#ffffff 100%)"></div><div class="a" style="left:64px;top:622px;width:195px;height:16px;background:linear-gradient(to right,#ececec 0%,#efefef 70%,#ffffff 100%)"></div><div class="a" style="left:64px;top:788px;width:195px;height:16px;background:linear-gradient(to right,#ececec 0%,#efefef 70%,#ffffff 100%)"></div><div class="a" style="left:64px;top:954px;width:195px;height:16px;background:linear-gradient(to right,#ececec 0%,#efefef 70%,#ffffff 100%)"></div><div class="t" style="left:49px;top:174px;font-size:14px;color:#000;font-weight:normal;">Project "Convertisseur Décimal...</div><div class="t" style="left:72px;top:190px;font-size:14px;color:#000;font-weight:normal;">Page de garde</div><div class="t" style="left:72px;top:206px;font-size:14px;color:#000;font-weight:normal;">Alimentation</div><div class="t" style="left:72px;top:222px;font-size:14px;color:#000;font-weight:normal;">Entrée</div><div class="t" style="left:72px;top:238px;font-size:14px;color:#000;font-weight:normal;">Multiplicateur d'entrée</div><div class="t" style="left:72px;top:254px;font-size:14px;color:#000;font-weight:normal;">Conversion</div><div class="t" style="left:72px;top:270px;font-size:14px;color:#000;font-weight:normal;">Sortie</div><div class="t" style="left:72px;top:286px;font-size:14px;color:#000;font-weight:normal;">Bornier</div><div class="t" style="left:69px;top:302px;font-size:14px;color:#000;font-weight:normal;">Project collection</div><div class="t" style="left:49px;top:318px;font-size:14px;color:#000;font-weight:normal;">Project domestique</div><div class="t" style="left:72px;top:334px;font-size:14px;color:#000;font-weight:normal;">Exemple d'installation dom...</div><div class="t" style="left:69px;top:350px;font-size:14px;color:#000;font-weight:normal;">Project collection</div><div class="t" style="left:49px;top:366px;font-size:14px;color:#000;font-weight:normal;">QET Collection</div><div class="t" style="left:69px;top:382px;font-size:14px;color:#000;font-weight:normal;">Measuring instruments</div><div class="t" style="left:69px;top:398px;font-size:14px;color:#000;font-weight:normal;">Automatism</div><div class="t" style="left:69px;top:414px;font-size:14px;color:#000;font-weight:normal;">Safety modules</div><div class="t" style="left:69px;top:430px;font-size:14px;color:#000;font-weight:normal;">Terminals</div><div class="t" style="left:69px;top:446px;font-size:14px;color:#000;font-weight:normal;">Transducers</div><div class="t" style="left:69px;top:462px;font-size:14px;color:#000;font-weight:normal;">Contacts</div><div class="t" style="left:69px;top:478px;font-size:14px;color:#000;font-weight:normal;">Converters</div><div class="t" style="left:69px;top:494px;font-size:14px;color:#000;font-weight:normal;">High voltage</div><div class="t" style="left:69px;top:510px;font-size:14px;color:#000;font-weight:normal;">Nomenclatures</div><div class="t" style="left:69px;top:526px;font-size:14px;color:#000;font-weight:normal;">Protections</div><div class="t" style="left:69px;top:542px;font-size:14px;color:#000;font-weight:normal;">Receivers</div><div class="t" style="left:69px;top:558px;font-size:14px;color:#000;font-weight:normal;">Semiconductors</div><div class="t" style="left:69px;top:574px;font-size:14px;color:#000;font-weight:normal;">Sources</div><div class="t" style="left:49px;top:590px;font-size:14px;color:#000;font-weight:normal;">User Collection</div><div class="t" style="left:69px;top:606px;font-size:14px;color:#000;font-weight:normal;">RLC</div><div class="t" style="left:89px;top:622px;font-size:14px;color:#000;font-weight:normal;">Single line</div><div class="t" style="left:113px;top:655px;font-size:14px;color:#000;font-weight:normal;">Capacitor</div><div class="t" style="left:113px;top:705px;font-size:14px;color:#000;font-weight:normal;">Inductor</div><div class="t" style="left:113px;top:755px;font-size:14px;color:#000;font-weight:normal;">Resistor</div><div class="t" style="left:89px;top:788px;font-size:14px;color:#000;font-weight:normal;">Normal</div><div class="t" style="left:113px;top:821px;font-size:14px;color:#000;font-weight:normal;">Capacitor</div><div class="t" style="left:113px;top:871px;font-size:14px;color:#000;font-weight:normal;">Inductor</div><div class="t" style="left:113px;top:921px;font-size:14px;color:#000;font-weight:normal;">Resistor</div><div class="t" style="left:89px;top:954px;font-size:14px;color:#000;font-weight:normal;">Disturbance</div><div class="t" style="left:113px;top:987px;font-size:14px;color:#000;font-weight:normal;">Capacitor</div><div class="a" style="left:0;top:0;width:290px;height:1026px;overflow:hidden"><svg style="left:0;top:0" width="290" height="1026"><path d="M14.5 175 V598" stroke="#3a3a3a" stroke-width="1" stroke-dasharray="1,1"/><path d="M34.5 190 V310" stroke="#3a3a3a" stroke-width="1" stroke-dasharray="1,1"/><path d="M34.5 334 V358" stroke="#3a3a3a" stroke-width="1" stroke-dasharray="1,1"/><path d="M34.5 382 V582" stroke="#3a3a3a" stroke-width="1" stroke-dasharray="1,1"/><path d="M34.5 605 V614" stroke="#3a3a3a" stroke-width="1" stroke-dasharray="1,1"/><path d="M54.5 614 V962" stroke="#3a3a3a" stroke-width="1" stroke-dasharray="1,1"/><path d="M74.5 630 V763" stroke="#3a3a3a" stroke-width="1" stroke-dasharray="1,1"/><path d="M74.5 804 V929" stroke="#3a3a3a" stroke-width="1" stroke-dasharray="1,1"/><path d="M74.5 970 V1026" stroke="#3a3a3a" stroke-width="1" stroke-dasharray="1,1"/><path d="M18 182.5 H25" stroke="#3a3a3a" stroke-width="1" stroke-dasharray="1,1"/><g transform="translate(9,177)"><rect x="0.5" y="0.5" width="8" height="8" rx="1" fill="#fff" stroke="#8a8a8a"/><path d="M2 4.5 H7" stroke="#666"/></g><g transform="translate(27,176)"><path d="M0.5 1.5 Q0.5 0 2 0 H6 L7.5 1.5 H14.5 Q15.5 1.5 15.5 2.5 V11 Q15.5 12 14.5 12 H1.5 Q0.5 12 0.5 11 Z" fill="#8ade90"/><path d="M0.5 3 H15.5 V11 Q15.5 12 14.5 12 H1.5 Q0.5 12 0.5 11 Z" fill="#46c852"/><path d="M0.5 9 H15.5 V11 Q15.5 12 14.5 12 H1.5 Q0.5 12 0.5 11 Z" fill="#8ee096"/></g><path d="M34 198.5 H45" stroke="#3a3a3a" stroke-width="1" stroke-dasharray="1,1"/><g transform="translate(48,191)"><rect x="0.6" y="0.6" width="15.8" height="12.8" fill="#fff" stroke="#000" stroke-width="1.2"/><path d="M0.6 10.4 H16.4 M5.5 10.4 V13.4 M11.5 10.4 V13.4" stroke="#000" stroke-width="1.2"/></g><path d="M34 214.5 H45" stroke="#3a3a3a" stroke-width="1" stroke-dasharray="1,1"/><g transform="translate(48,207)"><rect x="0.6" y="0.6" width="15.8" height="12.8" fill="#fff" stroke="#000" stroke-width="1.2"/><path d="M0.6 10.4 H16.4 M5.5 10.4 V13.4 M11.5 10.4 V13.4" stroke="#000" stroke-width="1.2"/></g><path d="M34 230.5 H45" stroke="#3a3a3a" stroke-width="1" stroke-dasharray="1,1"/><g transform="translate(48,223)"><rect x="0.6" y="0.6" width="15.8" height="12.8" fill="#fff" stroke="#000" stroke-width="1.2"/><path d="M0.6 10.4 H16.4 M5.5 10.4 V13.4 M11.5 10.4 V13.4" stroke="#000" stroke-width="1.2"/></g><path d="M34 246.5 H45" stroke="#3a3a3a" stroke-width="1" stroke-dasharray="1,1"/><g transform="translate(48,239)"><rect x="0.6" y="0.6" width="15.8" height="12.8" fill="#fff" stroke="#000" stroke-width="1.2"/><path d="M0.6 10.4 H16.4 M5.5 10.4 V13.4 M11.5 10.4 V13.4" stroke="#000" stroke-width="1.2"/></g><path d="M34 262.5 H45" stroke="#3a3a3a" stroke-width="1" stroke-dasharray="1,1"/><g transform="translate(48,255)"><rect x="0.6" y="0.6" width="15.8" height="12.8" fill="#fff" stroke="#000" stroke-width="1.2"/><path d="M0.6 10.4 H16.4 M5.5 10.4 V13.4 M11.5 10.4 V13.4" stroke="#000" stroke-width="1.2"/></g><path d="M34 278.5 H45" stroke="#3a3a3a" stroke-width="1" stroke-dasharray="1,1"/><g transform="translate(48,271)"><rect x="0.6" y="0.6" width="15.8" height="12.8" fill="#fff" stroke="#000" stroke-width="1.2"/><path d="M0.6 10.4 H16.4 M5.5 10.4 V13.4 M11.5 10.4 V13.4" stroke="#000" stroke-width="1.2"/></g><path d="M34 294.5 H45" stroke="#3a3a3a" stroke-width="1" stroke-dasharray="1,1"/><g transform="translate(48,287)"><rect x="0.6" y="0.6" width="15.8" height="12.8" fill="#fff" stroke="#000" stroke-width="1.2"/><path d="M0.6 10.4 H16.4 M5.5 10.4 V13.4 M11.5 10.4 V13.4" stroke="#000" stroke-width="1.2"/></g><path d="M38 310.5 H45" stroke="#3a3a3a" stroke-width="1" stroke-dasharray="1,1"/><g transform="translate(29,305)"><rect x="0.5" y="0.5" width="8" height="8" rx="1" fill="#fff" stroke="#8a8a8a"/><path d="M2 4.5 H7" stroke="#666"/><path d="M4.5 2 V7" stroke="#666"/></g><g transform="translate(47,304)"><path d="M0.5 2 Q0.5 0.5 2 0.5 H6 L7.5 2 H14.5 Q15.5 2 15.5 3 V11.5 Q15.5 12.5 14.5 12.5 H1.5 Q0.5 12.5 0.5 11.5 Z" fill="#4d86d8"/><path d="M0.5 4 H15.5 V11.5 Q15.5 12.5 14.5 12.5 H1.5 Q0.5 12.5 0.5 11.5 Z" fill="#7eb0f0"/><path d="M0.5 4 H15.5 V6 H0.5 Z" fill="#a6cbf7"/><path d="M0.5 11 H15.5 V12.5 H0.5 Z" fill="#5a8ed6"/></g><path d="M18 326.5 H25" stroke="#3a3a3a" stroke-width="1" stroke-dasharray="1,1"/><g transform="translate(9,321)"><rect x="0.5" y="0.5" width="8" height="8" rx="1" fill="#fff" stroke="#8a8a8a"/><path d="M2 4.5 H7" stroke="#666"/></g><g transform="translate(27,320)"><path d="M0.5 1.5 Q0.5 0 2 0 H6 L7.5 1.5 H14.5 Q15.5 1.5 15.5 2.5 V11 Q15.5 12 14.5 12 H1.5 Q0.5 12 0.5 11 Z" fill="#8ade90"/><path d="M0.5 3 H15.5 V11 Q15.5 12 14.5 12 H1.5 Q0.5 12 0.5 11 Z" fill="#46c852"/><path d="M0.5 9 H15.5 V11 Q15.5 12 14.5 12 H1.5 Q0.5 12 0.5 11 Z" fill="#8ee096"/></g><path d="M34 342.5 H45" stroke="#3a3a3a" stroke-width="1" stroke-dasharray="1,1"/><g transform="translate(48,335)"><rect x="0.6" y="0.6" width="15.8" height="12.8" fill="#fff" stroke="#000" stroke-width="1.2"/><path d="M0.6 10.4 H16.4 M5.5 10.4 V13.4 M11.5 10.4 V13.4" stroke="#000" stroke-width="1.2"/></g><path d="M34 358.5 H45" stroke="#3a3a3a" stroke-width="1" stroke-dasharray="1,1"/><g transform="translate(47,352)"><path d="M0.5 2 Q0.5 0.5 2 0.5 H6 L7.5 2 H14.5 Q15.5 2 15.5 3 V11.5 Q15.5 12.5 14.5 12.5 H1.5 Q0.5 12.5 0.5 11.5 Z" fill="#4d86d8"/><path d="M0.5 4 H15.5 V11.5 Q15.5 12.5 14.5 12.5 H1.5 Q0.5 12.5 0.5 11.5 Z" fill="#7eb0f0"/><path d="M0.5 4 H15.5 V6 H0.5 Z" fill="#a6cbf7"/><path d="M0.5 11 H15.5 V12.5 H0.5 Z" fill="#5a8ed6"/></g><path d="M18 374.5 H25" stroke="#3a3a3a" stroke-width="1" stroke-dasharray="1,1"/><g transform="translate(9,369)"><rect x="0.5" y="0.5" width="8" height="8" rx="1" fill="#fff" stroke="#8a8a8a"/><path d="M2 4.5 H7" stroke="#666"/></g><g transform="translate(27,366)"><circle cx="8" cy="8" r="6.5" fill="#fff" stroke="#333" stroke-width="1.1"/><path d="M3.5 3.5 L12.5 12.5 M12.5 3.5 L3.5 12.5" stroke="#333" stroke-width="1.1"/></g><path d="M38 390.5 H45" stroke="#3a3a3a" stroke-width="1" stroke-dasharray="1,1"/><g transform="translate(29,385)"><rect x="0.5" y="0.5" width="8" height="8" rx="1" fill="#fff" stroke="#8a8a8a"/><path d="M2 4.5 H7" stroke="#666"/><path d="M4.5 2 V7" stroke="#666"/></g><g transform="translate(47,384)"><path d="M0.5 2 Q0.5 0.5 2 0.5 H6 L7.5 2 H14.5 Q15.5 2 15.5 3 V11.5 Q15.5 12.5 14.5 12.5 H1.5 Q0.5 12.5 0.5 11.5 Z" fill="#4d86d8"/><path d="M0.5 4 H15.5 V11.5 Q15.5 12.5 14.5 12.5 H1.5 Q0.5 12.5 0.5 11.5 Z" fill="#7eb0f0"/><path d="M0.5 4 H15.5 V6 H0.5 Z" fill="#a6cbf7"/><path d="M0.5 11 H15.5 V12.5 H0.5 Z" fill="#5a8ed6"/></g><path d="M38 406.5 H45" stroke="#3a3a3a" stroke-width="1" stroke-dasharray="1,1"/><g transform="translate(29,401)"><rect x="0.5" y="0.5" width="8" height="8" rx="1" fill="#fff" stroke="#8a8a8a"/><path d="M2 4.5 H7" stroke="#666"/><path d="M4.5 2 V7" stroke="#666"/></g><g transform="translate(47,400)"><path d="M0.5 2 Q0.5 0.5 2 0.5 H6 L7.5 2 H14.5 Q15.5 2 15.5 3 V11.5 Q15.5 12.5 14.5 12.5 H1.5 Q0.5 12.5 0.5 11.5 Z" fill="#4d86d8"/><path d="M0.5 4 H15.5 V11.5 Q15.5 12.5 14.5 12.5 H1.5 Q0.5 12.5 0.5 11.5 Z" fill="#7eb0f0"/><path d="M0.5 4 H15.5 V6 H0.5 Z" fill="#a6cbf7"/><path d="M0.5 11 H15.5 V12.5 H0.5 Z" fill="#5a8ed6"/></g><path d="M38 422.5 H45" stroke="#3a3a3a" stroke-width="1" stroke-dasharray="1,1"/><g transform="translate(29,417)"><rect x="0.5" y="0.5" width="8" height="8" rx="1" fill="#fff" stroke="#8a8a8a"/><path d="M2 4.5 H7" stroke="#666"/><path d="M4.5 2 V7" stroke="#666"/></g><g transform="translate(47,416)"><path d="M0.5 2 Q0.5 0.5 2 0.5 H6 L7.5 2 H14.5 Q15.5 2 15.5 3 V11.5 Q15.5 12.5 14.5 12.5 H1.5 Q0.5 12.5 0.5 11.5 Z" fill="#4d86d8"/><path d="M0.5 4 H15.5 V11.5 Q15.5 12.5 14.5 12.5 H1.5 Q0.5 12.5 0.5 11.5 Z" fill="#7eb0f0"/><path d="M0.5 4 H15.5 V6 H0.5 Z" fill="#a6cbf7"/><path d="M0.5 11 H15.5 V12.5 H0.5 Z" fill="#5a8ed6"/></g><path d="M38 438.5 H45" stroke="#3a3a3a" stroke-width="1" stroke-dasharray="1,1"/><g transform="translate(29,433)"><rect x="0.5" y="0.5" width="8" height="8" rx="1" fill="#fff" stroke="#8a8a8a"/><path d="M2 4.5 H7" stroke="#666"/><path d="M4.5 2 V7" stroke="#666"/></g><g transform="translate(47,432)"><path d="M0.5 2 Q0.5 0.5 2 0.5 H6 L7.5 2 H14.5 Q15.5 2 15.5 3 V11.5 Q15.5 12.5 14.5 12.5 H1.5 Q0.5 12.5 0.5 11.5 Z" fill="#4d86d8"/><path d="M0.5 4 H15.5 V11.5 Q15.5 12.5 14.5 12.5 H1.5 Q0.5 12.5 0.5 11.5 Z" fill="#7eb0f0"/><path d="M0.5 4 H15.5 V6 H0.5 Z" fill="#a6cbf7"/><path d="M0.5 11 H15.5 V12.5 H0.5 Z" fill="#5a8ed6"/></g><path d="M38 454.5 H45" stroke="#3a3a3a" stroke-width="1" stroke-dasharray="1,1"/><g transform="translate(29,449)"><rect x="0.5" y="0.5" width="8" height="8" rx="1" fill="#fff" stroke="#8a8a8a"/><path d="M2 4.5 H7" stroke="#666"/><path d="M4.5 2 V7" stroke="#666"/></g><g transform="translate(47,448)"><path d="M0.5 2 Q0.5 0.5 2 0.5 H6 L7.5 2 H14.5 Q15.5 2 15.5 3 V11.5 Q15.5 12.5 14.5 12.5 H1.5 Q0.5 12.5 0.5 11.5 Z" fill="#4d86d8"/><path d="M0.5 4 H15.5 V11.5 Q15.5 12.5 14.5 12.5 H1.5 Q0.5 12.5 0.5 11.5 Z" fill="#7eb0f0"/><path d="M0.5 4 H15.5 V6 H0.5 Z" fill="#a6cbf7"/><path d="M0.5 11 H15.5 V12.5 H0.5 Z" fill="#5a8ed6"/></g><path d="M38 470.5 H45" stroke="#3a3a3a" stroke-width="1" stroke-dasharray="1,1"/><g transform="translate(29,465)"><rect x="0.5" y="0.5" width="8" height="8" rx="1" fill="#fff" stroke="#8a8a8a"/><path d="M2 4.5 H7" stroke="#666"/><path d="M4.5 2 V7" stroke="#666"/></g><g transform="translate(47,464)"><path d="M0.5 2 Q0.5 0.5 2 0.5 H6 L7.5 2 H14.5 Q15.5 2 15.5 3 V11.5 Q15.5 12.5 14.5 12.5 H1.5 Q0.5 12.5 0.5 11.5 Z" fill="#4d86d8"/><path d="M0.5 4 H15.5 V11.5 Q15.5 12.5 14.5 12.5 H1.5 Q0.5 12.5 0.5 11.5 Z" fill="#7eb0f0"/><path d="M0.5 4 H15.5 V6 H0.5 Z" fill="#a6cbf7"/><path d="M0.5 11 H15.5 V12.5 H0.5 Z" fill="#5a8ed6"/></g><path d="M38 486.5 H45" stroke="#3a3a3a" stroke-width="1" stroke-dasharray="1,1"/><g transform="translate(29,481)"><rect x="0.5" y="0.5" width="8" height="8" rx="1" fill="#fff" stroke="#8a8a8a"/><path d="M2 4.5 H7" stroke="#666"/><path d="M4.5 2 V7" stroke="#666"/></g><g transform="translate(47,480)"><path d="M0.5 2 Q0.5 0.5 2 0.5 H6 L7.5 2 H14.5 Q15.5 2 15.5 3 V11.5 Q15.5 12.5 14.5 12.5 H1.5 Q0.5 12.5 0.5 11.5 Z" fill="#4d86d8"/><path d="M0.5 4 H15.5 V11.5 Q15.5 12.5 14.5 12.5 H1.5 Q0.5 12.5 0.5 11.5 Z" fill="#7eb0f0"/><path d="M0.5 4 H15.5 V6 H0.5 Z" fill="#a6cbf7"/><path d="M0.5 11 H15.5 V12.5 H0.5 Z" fill="#5a8ed6"/></g><path d="M38 502.5 H45" stroke="#3a3a3a" stroke-width="1" stroke-dasharray="1,1"/><g transform="translate(29,497)"><rect x="0.5" y="0.5" width="8" height="8" rx="1" fill="#fff" stroke="#8a8a8a"/><path d="M2 4.5 H7" stroke="#666"/><path d="M4.5 2 V7" stroke="#666"/></g><g transform="translate(47,496)"><path d="M0.5 2 Q0.5 0.5 2 0.5 H6 L7.5 2 H14.5 Q15.5 2 15.5 3 V11.5 Q15.5 12.5 14.5 12.5 H1.5 Q0.5 12.5 0.5 11.5 Z" fill="#4d86d8"/><path d="M0.5 4 H15.5 V11.5 Q15.5 12.5 14.5 12.5 H1.5 Q0.5 12.5 0.5 11.5 Z" fill="#7eb0f0"/><path d="M0.5 4 H15.5 V6 H0.5 Z" fill="#a6cbf7"/><path d="M0.5 11 H15.5 V12.5 H0.5 Z" fill="#5a8ed6"/></g><path d="M38 518.5 H45" stroke="#3a3a3a" stroke-width="1" stroke-dasharray="1,1"/><g transform="translate(29,513)"><rect x="0.5" y="0.5" width="8" height="8" rx="1" fill="#fff" stroke="#8a8a8a"/><path d="M2 4.5 H7" stroke="#666"/><path d="M4.5 2 V7" stroke="#666"/></g><g transform="translate(47,512)"><path d="M0.5 2 Q0.5 0.5 2 0.5 H6 L7.5 2 H14.5 Q15.5 2 15.5 3 V11.5 Q15.5 12.5 14.5 12.5 H1.5 Q0.5 12.5 0.5 11.5 Z" fill="#4d86d8"/><path d="M0.5 4 H15.5 V11.5 Q15.5 12.5 14.5 12.5 H1.5 Q0.5 12.5 0.5 11.5 Z" fill="#7eb0f0"/><path d="M0.5 4 H15.5 V6 H0.5 Z" fill="#a6cbf7"/><path d="M0.5 11 H15.5 V12.5 H0.5 Z" fill="#5a8ed6"/></g><path d="M38 534.5 H45" stroke="#3a3a3a" stroke-width="1" stroke-dasharray="1,1"/><g transform="translate(29,529)"><rect x="0.5" y="0.5" width="8" height="8" rx="1" fill="#fff" stroke="#8a8a8a"/><path d="M2 4.5 H7" stroke="#666"/><path d="M4.5 2 V7" stroke="#666"/></g><g transform="translate(47,528)"><path d="M0.5 2 Q0.5 0.5 2 0.5 H6 L7.5 2 H14.5 Q15.5 2 15.5 3 V11.5 Q15.5 12.5 14.5 12.5 H1.5 Q0.5 12.5 0.5 11.5 Z" fill="#4d86d8"/><path d="M0.5 4 H15.5 V11.5 Q15.5 12.5 14.5 12.5 H1.5 Q0.5 12.5 0.5 11.5 Z" fill="#7eb0f0"/><path d="M0.5 4 H15.5 V6 H0.5 Z" fill="#a6cbf7"/><path d="M0.5 11 H15.5 V12.5 H0.5 Z" fill="#5a8ed6"/></g><path d="M38 550.5 H45" stroke="#3a3a3a" stroke-width="1" stroke-dasharray="1,1"/><g transform="translate(29,545)"><rect x="0.5" y="0.5" width="8" height="8" rx="1" fill="#fff" stroke="#8a8a8a"/><path d="M2 4.5 H7" stroke="#666"/><path d="M4.5 2 V7" stroke="#666"/></g><g transform="translate(47,544)"><path d="M0.5 2 Q0.5 0.5 2 0.5 H6 L7.5 2 H14.5 Q15.5 2 15.5 3 V11.5 Q15.5 12.5 14.5 12.5 H1.5 Q0.5 12.5 0.5 11.5 Z" fill="#4d86d8"/><path d="M0.5 4 H15.5 V11.5 Q15.5 12.5 14.5 12.5 H1.5 Q0.5 12.5 0.5 11.5 Z" fill="#7eb0f0"/><path d="M0.5 4 H15.5 V6 H0.5 Z" fill="#a6cbf7"/><path d="M0.5 11 H15.5 V12.5 H0.5 Z" fill="#5a8ed6"/></g><path d="M38 566.5 H45" stroke="#3a3a3a" stroke-width="1" stroke-dasharray="1,1"/><g transform="translate(29,561)"><rect x="0.5" y="0.5" width="8" height="8" rx="1" fill="#fff" stroke="#8a8a8a"/><path d="M2 4.5 H7" stroke="#666"/><path d="M4.5 2 V7" stroke="#666"/></g><g transform="translate(47,560)"><path d="M0.5 2 Q0.5 0.5 2 0.5 H6 L7.5 2 H14.5 Q15.5 2 15.5 3 V11.5 Q15.5 12.5 14.5 12.5 H1.5 Q0.5 12.5 0.5 11.5 Z" fill="#4d86d8"/><path d="M0.5 4 H15.5 V11.5 Q15.5 12.5 14.5 12.5 H1.5 Q0.5 12.5 0.5 11.5 Z" fill="#7eb0f0"/><path d="M0.5 4 H15.5 V6 H0.5 Z" fill="#a6cbf7"/><path d="M0.5 11 H15.5 V12.5 H0.5 Z" fill="#5a8ed6"/></g><path d="M38 582.5 H45" stroke="#3a3a3a" stroke-width="1" stroke-dasharray="1,1"/><g transform="translate(29,577)"><rect x="0.5" y="0.5" width="8" height="8" rx="1" fill="#fff" stroke="#8a8a8a"/><path d="M2 4.5 H7" stroke="#666"/><path d="M4.5 2 V7" stroke="#666"/></g><g transform="translate(47,576)"><path d="M0.5 2 Q0.5 0.5 2 0.5 H6 L7.5 2 H14.5 Q15.5 2 15.5 3 V11.5 Q15.5 12.5 14.5 12.5 H1.5 Q0.5 12.5 0.5 11.5 Z" fill="#4d86d8"/><path d="M0.5 4 H15.5 V11.5 Q15.5 12.5 14.5 12.5 H1.5 Q0.5 12.5 0.5 11.5 Z" fill="#7eb0f0"/><path d="M0.5 4 H15.5 V6 H0.5 Z" fill="#a6cbf7"/><path d="M0.5 11 H15.5 V12.5 H0.5 Z" fill="#5a8ed6"/></g><path d="M18 598.5 H25" stroke="#3a3a3a" stroke-width="1" stroke-dasharray="1,1"/><g transform="translate(9,593)"><rect x="0.5" y="0.5" width="8" height="8" rx="1" fill="#fff" stroke="#8a8a8a"/><path d="M2 4.5 H7" stroke="#666"/></g><g transform="translate(26,590)"><path d="M1 8 L8 1.5 L15 8" stroke="#333" stroke-width="1.3" fill="none"/><path d="M3 7.5 V15 H13 V7.5 L8 3 Z" fill="#fff" stroke="#444" stroke-width="1"/><rect x="6.5" y="9.5" width="3" height="5.5" fill="#d05a10"/><rect x="11" y="2" width="1.5" height="3" fill="#333"/></g><path d="M38 614.5 H45" stroke="#3a3a3a" stroke-width="1" stroke-dasharray="1,1"/><g transform="translate(29,609)"><rect x="0.5" y="0.5" width="8" height="8" rx="1" fill="#fff" stroke="#8a8a8a"/><path d="M2 4.5 H7" stroke="#666"/></g><g transform="translate(47,608)"><path d="M0.5 2 Q0.5 0.5 2 0.5 H6 L7.5 2 H14.5 Q15.5 2 15.5 3 V11.5 Q15.5 12.5 14.5 12.5 H1.5 Q0.5 12.5 0.5 11.5 Z" fill="#4d86d8"/><path d="M0.5 4 H15.5 V11.5 Q15.5 12.5 14.5 12.5 H1.5 Q0.5 12.5 0.5 11.5 Z" fill="#7eb0f0"/><path d="M0.5 4 H15.5 V6 H0.5 Z" fill="#a6cbf7"/><path d="M0.5 11 H15.5 V12.5 H0.5 Z" fill="#5a8ed6"/></g><path d="M58 630.5 H65" stroke="#3a3a3a" stroke-width="1" stroke-dasharray="1,1"/><g transform="translate(49,625)"><rect x="0.5" y="0.5" width="8" height="8" rx="1" fill="#fff" stroke="#8a8a8a"/><path d="M2 4.5 H7" stroke="#666"/></g><g transform="translate(67,624)"><path d="M0.5 2 Q0.5 0.5 2 0.5 H6 L7.5 2 H14.5 Q15.5 2 15.5 3 V11.5 Q15.5 12.5 14.5 12.5 H1.5 Q0.5 12.5 0.5 11.5 Z" fill="#4d86d8"/><path d="M0.5 4 H15.5 V11.5 Q15.5 12.5 14.5 12.5 H1.5 Q0.5 12.5 0.5 11.5 Z" fill="#7eb0f0"/><path d="M0.5 4 H15.5 V6 H0.5 Z" fill="#a6cbf7"/><path d="M0.5 11 H15.5 V12.5 H0.5 Z" fill="#5a8ed6"/></g><path d="M75 663.5 H84" stroke="#3a3a3a" stroke-width="1" stroke-dasharray="1,1"/><path d="M97.5 643 V661 M92 661.5 H103 M92 666.5 H103" stroke="#000" stroke-width="1" fill="none"/><path d="M75 713.5 H84" stroke="#3a3a3a" stroke-width="1" stroke-dasharray="1,1"/><path d="M97.5 693 V703 Q102 705.5 97.5 708 Q102 710.5 97.5 713 Q102 715.5 97.5 718 Q102 720.5 97.5 723" stroke="#000" stroke-width="1" fill="none"/><path d="M75 763.5 H84" stroke="#3a3a3a" stroke-width="1" stroke-dasharray="1,1"/><path d="M97.5 743 V753" stroke="#000" stroke-width="1" fill="none"/><rect x="93.5" y="753.5" width="8" height="20" stroke="#000" stroke-width="1" fill="none"/><path d="M58 796.5 H65" stroke="#3a3a3a" stroke-width="1" stroke-dasharray="1,1"/><g transform="translate(49,791)"><rect x="0.5" y="0.5" width="8" height="8" rx="1" fill="#fff" stroke="#8a8a8a"/><path d="M2 4.5 H7" stroke="#666"/></g><g transform="translate(67,790)"><path d="M0.5 2 Q0.5 0.5 2 0.5 H6 L7.5 2 H14.5 Q15.5 2 15.5 3 V11.5 Q15.5 12.5 14.5 12.5 H1.5 Q0.5 12.5 0.5 11.5 Z" fill="#4d86d8"/><path d="M0.5 4 H15.5 V11.5 Q15.5 12.5 14.5 12.5 H1.5 Q0.5 12.5 0.5 11.5 Z" fill="#7eb0f0"/><path d="M0.5 4 H15.5 V6 H0.5 Z" fill="#a6cbf7"/><path d="M0.5 11 H15.5 V12.5 H0.5 Z" fill="#5a8ed6"/></g><path d="M75 829.5 H84" stroke="#3a3a3a" stroke-width="1" stroke-dasharray="1,1"/><path d="M97.5 809 V826 M92 826.5 H103 M92 832.5 H103 M97.5 832 V850" stroke="#000" stroke-width="1" fill="none"/><path d="M75 879.5 H84" stroke="#3a3a3a" stroke-width="1" stroke-dasharray="1,1"/><path d="M97.5 859 V869 Q102 871.5 97.5 874 Q102 876.5 97.5 879 Q102 881.5 97.5 884 Q102 886.5 97.5 889 V899" stroke="#000" stroke-width="1" fill="none"/><path d="M75 929.5 H84" stroke="#3a3a3a" stroke-width="1" stroke-dasharray="1,1"/><path d="M97.5 909 V919 M97.5 939 V949" stroke="#000" stroke-width="1" fill="none"/><rect x="93.5" y="919.5" width="8" height="20" stroke="#000" stroke-width="1" fill="none"/><path d="M58 962.5 H65" stroke="#3a3a3a" stroke-width="1" stroke-dasharray="1,1"/><g transform="translate(49,957)"><rect x="0.5" y="0.5" width="8" height="8" rx="1" fill="#fff" stroke="#8a8a8a"/><path d="M2 4.5 H7" stroke="#666"/></g><g transform="translate(67,956)"><path d="M0.5 2 Q0.5 0.5 2 0.5 H6 L7.5 2 H14.5 Q15.5 2 15.5 3 V11.5 Q15.5 12.5 14.5 12.5 H1.5 Q0.5 12.5 0.5 11.5 Z" fill="#4d86d8"/><path d="M0.5 4 H15.5 V11.5 Q15.5 12.5 14.5 12.5 H1.5 Q0.5 12.5 0.5 11.5 Z" fill="#7eb0f0"/><path d="M0.5 4 H15.5 V6 H0.5 Z" fill="#a6cbf7"/><path d="M0.5 11 H15.5 V12.5 H0.5 Z" fill="#5a8ed6"/></g><path d="M75 995.5 H84" stroke="#3a3a3a" stroke-width="1" stroke-dasharray="1,1"/><path d="M97.5 975 V991 M97.5 1001 V1016" stroke="#000" stroke-width="1.2" stroke-dasharray="3,2"/><path d="M92 994.5 H103 M92 1000.5 H103" stroke="#000" stroke-width="1.2" stroke-dasharray="3,1"/><path d="M75 1045.5 H84" stroke="#3a3a3a" stroke-width="1" stroke-dasharray="1,1"/><path d="M97.5 1025 V1027" stroke="#000" stroke-width="1.2"/></svg></div><div class="a" style="left:259px;top:173px;width:18px;height:853px;background:#f0f0f0;border-left:1px solid #dedede"></div><div class="a" style="left:260px;top:174px;width:16px;height:16px;background:linear-gradient(to bottom,#f6f6f8,#d8d8dc);border:1px solid #8c8c8c;border-radius:3px"></div><svg style="left:260px;top:174px" width="16" height="16"><path d="M4.0 10.0 L8.0 6.0 L12.0 10.0 Z" fill="#000"/></svg><div class="a" style="left:260px;top:190px;width:16px;height:683px;background:linear-gradient(to right,#f2f2f6,#dcdce0);border:1px solid #8c8c8c;border-radius:3px"></div><svg style="left:262px;top:525px" width="12" height="12"><rect x="2" y="1" width="1" height="1" fill="#aaa"/><rect x="2" y="4" width="1" height="1" fill="#aaa"/><rect x="2" y="7" width="1" height="1" fill="#aaa"/><rect x="2" y="10" width="1" height="1" fill="#aaa"/><rect x="6" y="1" width="1" height="1" fill="#aaa"/><rect x="6" y="4" width="1" height="1" fill="#aaa"/><rect x="6" y="7" width="1" height="1" fill="#aaa"/><rect x="6" y="10" width="1" height="1" fill="#aaa"/><rect x="10" y="1" width="1" height="1" fill="#aaa"/><rect x="10" y="4" width="1" height="1" fill="#aaa"/><rect x="10" y="7" width="1" height="1" fill="#aaa"/><rect x="10" y="10" width="1" height="1" fill="#aaa"/></svg><div class="a" style="left:260px;top:873px;width:16px;height:121px;background:repeating-conic-gradient(#e4e4e4 0 25%,#f8f8f8 0 50%) 0 0/2px 2px"></div><div class="a" style="left:260px;top:994px;width:16px;height:16px;background:linear-gradient(to bottom,#f6f6f8,#d8d8dc);border:1px solid #8c8c8c;border-radius:3px"></div><svg style="left:260px;top:994px" width="16" height="16"><path d="M4.0 10.0 L8.0 6.0 L12.0 10.0 Z" fill="#000"/></svg><div class="a" style="left:260px;top:1010px;width:16px;height:16px;background:linear-gradient(to bottom,#f6f6f8,#d8d8dc);border:1px solid #8c8c8c;border-radius:3px"></div><svg style="left:260px;top:1010px" width="16" height="16"><path d="M4.0 6.0 L8.0 10.0 L12.0 6.0 Z" fill="#000"/></svg><div class="a" style="left:284px;top:77px;width:1132px;height:24px;background:#fff"></div><div class="a" style="left:660px;top:81px;width:378px;height:20px;background:linear-gradient(to bottom,#e6e8ec,#cfd0d6);border:1px solid #8e8e92;border-radius:4px 4px 0 4px"></div><div class="a" style="left:284px;top:100px;width:1132px;height:1px;background:#8e8e92"></div><div class="a" style="left:284px;top:78px;width:377px;height:24px;background:#efefef;border:1px solid #8e8e92;border-bottom:none;border-radius:4px 4px 0 0"></div><svg style="left:0;top:0" width="1100" height="130"><g transform="translate(296,83)"><path d="M0.5 1.5 Q0.5 0 2 0 H6 L7.5 1.5 H14.5 Q15.5 1.5 15.5 2.5 V11 Q15.5 12 14.5 12 H1.5 Q0.5 12 0.5 11 Z" fill="#8ade90"/><path d="M0.5 3 H15.5 V11 Q15.5 12 14.5 12 H1.5 Q0.5 12 0.5 11 Z" fill="#46c852"/><path d="M0.5 9 H15.5 V11 Q15.5 12 14.5 12 H1.5 Q0.5 12 0.5 11 Z" fill="#8ee096"/></g><g transform="translate(673,84)"><path d="M0.5 1.5 Q0.5 0 2 0 H6 L7.5 1.5 H14.5 Q15.5 1.5 15.5 2.5 V11 Q15.5 12 14.5 12 H1.5 Q0.5 12 0.5 11 Z" fill="#8ade90"/><path d="M0.5 3 H15.5 V11 Q15.5 12 14.5 12 H1.5 Q0.5 12 0.5 11 Z" fill="#46c852"/><path d="M0.5 9 H15.5 V11 Q15.5 12 14.5 12 H1.5 Q0.5 12 0.5 11 Z" fill="#8ee096"/></g></svg><div class="t" style="left:361px;top:81px;font-size:14px;color:#000;font-weight:normal;">Project "Convertisseur Décimal Binaire"</div><div class="t" style="left:799px;top:82px;font-size:14px;color:#000;font-weight:normal;">Project domestique</div><div class="a" style="left:284px;top:101px;width:1132px;height:25px;background:#efefef"></div><div class="a" style="left:286px;top:105px;width:191px;height:20px;background:linear-gradient(to bottom,#eceef2,#d0d1d7);border:1px solid #8e8e92;border-radius:4px 4px 0 0"></div><div class="t" style="left:316px;top:106px;font-size:14px;color:#000;font-weight:normal;">Diagram Page de garde</div><div class="a" style="left:476px;top:105px;width:179px;height:20px;background:linear-gradient(to bottom,#eceef2,#d0d1d7);border:1px solid #8e8e92;border-radius:4px 4px 0 0"></div><div class="t" style="left:508px;top:106px;font-size:14px;color:#000;font-weight:normal;">Diagram Alimentation</div><div class="a" style="left:654px;top:105px;width:144px;height:20px;background:linear-gradient(to bottom,#eceef2,#d0d1d7);border:1px solid #8e8e92;border-radius:4px 4px 0 0"></div><div class="t" style="left:686px;top:106px;font-size:14px;color:#000;font-weight:normal;">Diagram Entrée</div><div class="a" style="left:797px;top:105px;width:242px;height:20px;background:linear-gradient(to bottom,#eceef2,#d0d1d7);border:1px solid #8e8e92;border-radius:4px 4px 0 0"></div><div class="t" style="left:829px;top:106px;font-size:14px;color:#000;font-weight:normal;">Diagram Multiplicateur d'entrée</div><div class="a" style="left:1205px;top:105px;width:139px;height:20px;background:linear-gradient(to bottom,#eceef2,#d0d1d7);border:1px solid #8e8e92;border-radius:4px 4px 0 0"></div><div class="t" style="left:1237px;top:106px;font-size:14px;color:#000;font-weight:normal;">Diagram Sortie</div><div class="a" style="left:1343px;top:105px;width:44px;height:20px;background:linear-gradient(to bottom,#eceef2,#d0d1d7);border:1px solid #8e8e92;border-radius:4px 4px 0 0"></div><div class="t" style="left:1375px;top:106px;font-size:14px;color:#000;font-weight:normal;">D</div><div class="a" style="left:1037px;top:102px;width:169px;height:24px;background:#efefef;border:1px solid #8e8e92;border-bottom:none;border-radius:4px 4px 0 0"></div><div class="a" style="left:1041px;top:105px;width:161px;height:18px;border:1px dotted #222"></div><div class="t" style="left:1069px;top:105px;font-size:14px;color:#000;font-weight:normal;">Diagram Conversion</div><svg style="left:0;top:0" width="1420" height="130"><g transform="translate(296,108)"><rect x="0.5" y="0.5" width="14" height="12" fill="#fff" stroke="#222" stroke-width="1.2"/><path d="M0.5 9.5 H14.5 M5 9.5 V12.5 M10 9.5 V12.5" stroke="#222" stroke-width="1.2"/></g><g transform="translate(488,108)"><rect x="0.5" y="0.5" width="14" height="12" fill="#fff" stroke="#222" stroke-width="1.2"/><path d="M0.5 9.5 H14.5 M5 9.5 V12.5 M10 9.5 V12.5" stroke="#222" stroke-width="1.2"/></g><g transform="translate(666,108)"><rect x="0.5" y="0.5" width="14" height="12" fill="#fff" stroke="#222" stroke-width="1.2"/><path d="M0.5 9.5 H14.5 M5 9.5 V12.5 M10 9.5 V12.5" stroke="#222" stroke-width="1.2"/></g><g transform="translate(809,108)"><rect x="0.5" y="0.5" width="14" height="12" fill="#fff" stroke="#222" stroke-width="1.2"/><path d="M0.5 9.5 H14.5 M5 9.5 V12.5 M10 9.5 V12.5" stroke="#222" stroke-width="1.2"/></g><g transform="translate(1217,108)"><rect x="0.5" y="0.5" width="14" height="12" fill="#fff" stroke="#222" stroke-width="1.2"/><path d="M0.5 9.5 H14.5 M5 9.5 V12.5 M10 9.5 V12.5" stroke="#222" stroke-width="1.2"/></g><g transform="translate(1355,108)"><rect x="0.5" y="0.5" width="14" height="12" fill="#fff" stroke="#222" stroke-width="1.2"/><path d="M0.5 9.5 H14.5 M5 9.5 V12.5 M10 9.5 V12.5" stroke="#222" stroke-width="1.2"/></g><g transform="translate(1050,107)"><rect x="0.5" y="0.5" width="14" height="12" fill="#fff" stroke="#222" stroke-width="1.2"/><path d="M0.5 9.5 H14.5 M5 9.5 V12.5 M10 9.5 V12.5" stroke="#222" stroke-width="1.2"/></g></svg><div class="a" style="left:1385px;top:102px;width:31px;height:24px;background:#efefef"></div><div class="a" style="left:1385px;top:102px;width:15px;height:23px;background:linear-gradient(to bottom,#f6f6f8,#d8d8dc);border:1px solid #8c8c8c;border-radius:3px"></div><div class="a" style="left:1400px;top:102px;width:15px;height:23px;background:linear-gradient(to bottom,#f6f6f8,#d8d8dc);border:1px solid #8c8c8c;border-radius:3px"></div><svg style="left:1385px;top:102px" width="31" height="23"><path d="M10 6 L5 11.5 L10 17 Z" fill="#c4c4c4"/><path d="M21 6 L26 11.5 L21 17 Z" fill="#000"/></svg><div class="a" style="left:284px;top:125px;width:1132px;height:903px;background:#fff;border:1px solid #8c8c8c;border-radius:3px"></div><div class="a" style="left:285px;top:126px;width:1130px;height:901px;border:1px solid #e2e2e2;border-radius:2px"></div><div class="a" style="left:286px;top:127px;width:1128px;height:899px;border:1px solid #8c8c8c;border-left:2px solid #8c8c8c;border-top:1px solid #8c8c8c"></div><div class="a" style="left:286px;top:127px;width:1128px;height:898px;overflow:hidden"><svg style="left:0;top:0" width="1128" height="898" viewBox="286 127 1128 898"><defs><pattern id="grid" patternUnits="userSpaceOnUse" x="0" y="0" width="10" height="10"><rect x="8" y="8" width="1" height="1" fill="#000"/></pattern></defs><rect x="286" y="127" width="1128" height="898" fill="url(#grid)"/><rect x="293" y="133" width="1040" height="20" fill="#fff"/><rect x="293" y="133" width="20" height="660" fill="#fff"/><rect x="293" y="793" width="1040" height="50" fill="#fff"/><rect x="293.5" y="133.5" width="1040" height="710" fill="none" stroke="#000" stroke-width="1"/><path d="M326.5 173.5 L332.5 178.5 L326.5 183.5" fill="none" stroke="#222" stroke-width="1.1"/><path d="M326.5 763.5 L332.5 768.5 L326.5 773.5" fill="none" stroke="#222" stroke-width="1.1"/><rect x="553.5" y="728.5" width="30" height="20" fill="none" stroke="#000" stroke-width="1"/><rect x="913.5" y="728.5" width="30" height="20" fill="none" stroke="#000" stroke-width="1"/><rect x="1153.5" y="728.5" width="30" height="20" fill="none" stroke="#000" stroke-width="1"/><rect x="1243.5" y="728.5" width="30" height="20" fill="none" stroke="#000" stroke-width="1"/><path d="M293 153.5 L1334 153.5 M313.5 133 L313.5 153 M373.5 133 L373.5 153 M433.5 133 L433.5 153 M493.5 133 L493.5 153 M553.5 133 L553.5 153 M613.5 133 L613.5 153 M673.5 133 L673.5 153 M733.5 133 L733.5 153 M793.5 133 L793.5 153 M853.5 133 L853.5 153 M913.5 133 L913.5 153 M973.5 133 L973.5 153 M1033.5 133 L1033.5 153 M1093.5 133 L1093.5 153 M1153.5 133 L1153.5 153 M1213.5 133 L1213.5 153 M1273.5 133 L1273.5 153 M1333.5 133 L1333.5 153 M313.5 153 L313.5 793 M293 233.5 L313 233.5 M293 313.5 L313 313.5 M293 393.5 L313 393.5 M293 473.5 L313 473.5 M293 553.5 L313 553.5 M293 633.5 L313 633.5 M293 713.5 L313 713.5 M293 793.5 L313 793.5 M293 793.5 L1334 793.5 M525.5 793 L525.5 843 M1102.5 793 L1102.5 843 M293 818.5 L525 818.5 M1102 818.5 L1334 818.5 M333 178.5 L1248.5 178.5 M378.5 178 L378.5 198 M378.5 218 L378.5 339.5 M378.5 339.5 L385.5 339.5 M378.5 358 L378.5 499.5 M378.5 499.5 L385.5 499.5 M378.5 518 L378.5 659.5 M378.5 659.5 L385.5 659.5 M378.5 678 L378.5 698 M438.5 178 L438.5 199.5 M438.5 199.5 L445.5 199.5 M438.5 218 L438.5 338 M438.5 358 L438.5 499.5 M438.5 499.5 L445.5 499.5 M438.5 518 L438.5 659.5 M438.5 659.5 L445.5 659.5 M438.5 678 L438.5 698 M498.5 178 L498.5 199.5 M498.5 199.5 L505.5 199.5 M498.5 218 L498.5 339.5 M498.5 339.5 L505.5 339.5 M498.5 358 L498.5 498 M498.5 518 L498.5 659.5 M498.5 659.5 L505.5 659.5 M498.5 678 L498.5 698 M558.5 178 L558.5 199.5 M558.5 199.5 L565.5 199.5 M558.5 218 L558.5 339.5 M558.5 339.5 L565.5 339.5 M558.5 358 L558.5 499.5 M558.5 499.5 L565.5 499.5 M558.5 518 L558.5 658 M558.5 678 L558.5 698 M618.5 178 L618.5 198 M618.5 218 L618.5 338 M618.5 358 L618.5 499.5 M618.5 499.5 L625.5 499.5 M618.5 518 L618.5 659.5 M618.5 659.5 L625.5 659.5 M618.5 678 L618.5 698 M678.5 178 L678.5 198 M678.5 218 L678.5 339.5 M678.5 339.5 L685.5 339.5 M678.5 358 L678.5 498 M678.5 518 L678.5 659.5 M678.5 659.5 L685.5 659.5 M678.5 678 L678.5 698 M738.5 178 L738.5 198 M738.5 218 L738.5 339.5 M738.5 339.5 L745.5 339.5 M738.5 358 L738.5 499.5 M738.5 499.5 L745.5 499.5 M738.5 518 L738.5 658 M738.5 678 L738.5 698 M798.5 178 L798.5 199.5 M798.5 199.5 L805.5 199.5 M798.5 218 L798.5 338 M798.5 358 L798.5 498 M798.5 518 L798.5 659.5 M798.5 659.5 L805.5 659.5 M798.5 678 L798.5 698 M858.5 178 L858.5 199.5 M858.5 199.5 L865.5 199.5 M858.5 218 L858.5 338 M858.5 358 L858.5 499.5 M858.5 499.5 L865.5 499.5 M858.5 518 L858.5 658 M858.5 678 L858.5 698 M918.5 178 L918.5 199.5 M918.5 199.5 L925.5 199.5 M918.5 218 L918.5 339.5 M918.5 339.5 L925.5 339.5 M918.5 358 L918.5 498 M918.5 518 L918.5 658 M918.5 678 L918.5 698 M978.5 178 L978.5 198 M978.5 218 L978.5 338 M978.5 358 L978.5 498 M978.5 518 L978.5 659.5 M978.5 659.5 L985.5 659.5 M978.5 678 L978.5 698 M1038.5 178 L1038.5 198 M1038.5 218 L1038.5 338 M1038.5 358 L1038.5 499.5 M1038.5 499.5 L1045.5 499.5 M1038.5 518 L1038.5 658 M1038.5 678 L1038.5 698 M1098.5 178 L1098.5 198 M1098.5 218 L1098.5 339.5 M1098.5 339.5 L1105.5 339.5 M1098.5 358 L1098.5 498 M1098.5 518 L1098.5 658 M1098.5 678 L1098.5 698 M1158.5 178 L1158.5 199.5 M1158.5 199.5 L1165.5 199.5 M1158.5 218 L1158.5 338 M1158.5 358 L1158.5 498 M1158.5 518 L1158.5 658 M1158.5 678 L1158.5 698 M1248.5 178 L1248.5 198 M1248.5 218 L1248.5 338 M1248.5 358 L1248.5 498 M1248.5 518 L1248.5 658 M1248.5 678 L1248.5 728 M378 698.5 L558.5 698.5 M618 698.5 L918.5 698.5 M978 698.5 L1158.5 698.5 M558.5 698 L558.5 728 M558.5 748 L558.5 768 M918.5 698 L918.5 728 M918.5 748 L918.5 768 M1158.5 698 L1158.5 728 M1158.5 748 L1158.5 768 M1248.5 748 L1248.5 768 M333 768.5 L1248.5 768.5" stroke="#000" stroke-width="1" fill="none"/><path d="M373 197 L378.5 217 L378.5 228 M383.5 336.5 L378.5 357 L378.5 368 M383.5 496.5 L378.5 517 L378.5 528 M383.5 656.5 L378.5 677 L378.5 688 M443.5 196.5 L438.5 217 L438.5 228 M433 337 L438.5 357 L438.5 368 M443.5 496.5 L438.5 517 L438.5 528 M443.5 656.5 L438.5 677 L438.5 688 M503.5 196.5 L498.5 217 L498.5 228 M503.5 336.5 L498.5 357 L498.5 368 M493 497 L498.5 517 L498.5 528 M503.5 656.5 L498.5 677 L498.5 688 M563.5 196.5 L558.5 217 L558.5 228 M563.5 336.5 L558.5 357 L558.5 368 M563.5 496.5 L558.5 517 L558.5 528 M553 657 L558.5 677 L558.5 688 M613 197 L618.5 217 L618.5 228 M613 337 L618.5 357 L618.5 368 M623.5 496.5 L618.5 517 L618.5 528 M623.5 656.5 L618.5 677 L618.5 688 M673 197 L678.5 217 L678.5 228 M683.5 336.5 L678.5 357 L678.5 368 M673 497 L678.5 517 L678.5 528 M683.5 656.5 L678.5 677 L678.5 688 M733 197 L738.5 217 L738.5 228 M743.5 336.5 L738.5 357 L738.5 368 M743.5 496.5 L738.5 517 L738.5 528 M733 657 L738.5 677 L738.5 688 M803.5 196.5 L798.5 217 L798.5 228 M793 337 L798.5 357 L798.5 368 M793 497 L798.5 517 L798.5 528 M803.5 656.5 L798.5 677 L798.5 688 M863.5 196.5 L858.5 217 L858.5 228 M853 337 L858.5 357 L858.5 368 M863.5 496.5 L858.5 517 L858.5 528 M853 657 L858.5 677 L858.5 688 M923.5 196.5 L918.5 217 L918.5 228 M923.5 336.5 L918.5 357 L918.5 368 M913 497 L918.5 517 L918.5 528 M913 657 L918.5 677 L918.5 688 M973 197 L978.5 217 L978.5 228 M973 337 L978.5 357 L978.5 368 M973 497 L978.5 517 L978.5 528 M983.5 656.5 L978.5 677 L978.5 688 M1033 197 L1038.5 217 L1038.5 228 M1033 337 L1038.5 357 L1038.5 368 M1043.5 496.5 L1038.5 517 L1038.5 528 M1033 657 L1038.5 677 L1038.5 688 M1093 197 L1098.5 217 L1098.5 228 M1103.5 336.5 L1098.5 357 L1098.5 368 M1093 497 L1098.5 517 L1098.5 528 M1093 657 L1098.5 677 L1098.5 688 M1163.5 196.5 L1158.5 217 L1158.5 228 M1153 337 L1158.5 357 L1158.5 368 M1153 497 L1158.5 517 L1158.5 528 M1153 657 L1158.5 677 L1158.5 688 M1243 197 L1248.5 217 L1248.5 228 M1243 337 L1248.5 357 L1248.5 368 M1243 497 L1248.5 517 L1248.5 528 M1243 657 L1248.5 677 L1248.5 688" stroke="#1a1a1a" stroke-width="1.15" fill="none"/><circle cx="378.5" cy="178.5" r="2" fill="#000"/><circle cx="438.5" cy="178.5" r="2" fill="#000"/><circle cx="498.5" cy="178.5" r="2" fill="#000"/><circle cx="558.5" cy="178.5" r="2" fill="#000"/><circle cx="618.5" cy="178.5" r="2" fill="#000"/><circle cx="678.5" cy="178.5" r="2" fill="#000"/><circle cx="738.5" cy="178.5" r="2" fill="#000"/><circle cx="798.5" cy="178.5" r="2" fill="#000"/><circle cx="858.5" cy="178.5" r="2" fill="#000"/><circle cx="918.5" cy="178.5" r="2" fill="#000"/><circle cx="978.5" cy="178.5" r="2" fill="#000"/><circle cx="1038.5" cy="178.5" r="2" fill="#000"/><circle cx="1098.5" cy="178.5" r="2" fill="#000"/><circle cx="1158.5" cy="178.5" r="2" fill="#000"/><circle cx="438.5" cy="698.5" r="2" fill="#000"/><circle cx="498.5" cy="698.5" r="2" fill="#000"/><circle cx="558.5" cy="698.5" r="2" fill="#000"/><circle cx="678.5" cy="698.5" r="2" fill="#000"/><circle cx="738.5" cy="698.5" r="2" fill="#000"/><circle cx="798.5" cy="698.5" r="2" fill="#000"/><circle cx="858.5" cy="698.5" r="2" fill="#000"/><circle cx="918.5" cy="698.5" r="2" fill="#000"/><circle cx="1038.5" cy="698.5" r="2" fill="#000"/><circle cx="1098.5" cy="698.5" r="2" fill="#000"/><circle cx="1158.5" cy="698.5" r="2" fill="#000"/><circle cx="558.5" cy="768.5" r="2" fill="#000"/><circle cx="918.5" cy="768.5" r="2" fill="#000"/><circle cx="1158.5" cy="768.5" r="2" fill="#000"/><rect x="378" y="188" width="1" height="4" fill="#f00"/><rect x="378" y="187" width="1" height="1" fill="#00f"/><rect x="377" y="217" width="1" height="9" fill="#9a9a9a"/><rect x="378" y="225" width="1" height="4" fill="#f00"/><rect x="378" y="229" width="1" height="1" fill="#00f"/><rect x="378" y="328" width="1" height="4" fill="#f00"/><rect x="378" y="327" width="1" height="1" fill="#00f"/><rect x="377" y="357" width="1" height="9" fill="#9a9a9a"/><rect x="378" y="365" width="1" height="4" fill="#f00"/><rect x="378" y="369" width="1" height="1" fill="#00f"/><rect x="378" y="488" width="1" height="4" fill="#f00"/><rect x="378" y="487" width="1" height="1" fill="#00f"/><rect x="377" y="517" width="1" height="9" fill="#9a9a9a"/><rect x="378" y="525" width="1" height="4" fill="#f00"/><rect x="378" y="529" width="1" height="1" fill="#00f"/><rect x="378" y="648" width="1" height="4" fill="#f00"/><rect x="378" y="647" width="1" height="1" fill="#00f"/><rect x="377" y="677" width="1" height="9" fill="#9a9a9a"/><rect x="378" y="685" width="1" height="4" fill="#f00"/><rect x="378" y="689" width="1" height="1" fill="#00f"/><rect x="438" y="188" width="1" height="4" fill="#f00"/><rect x="438" y="187" width="1" height="1" fill="#00f"/><rect x="437" y="217" width="1" height="9" fill="#9a9a9a"/><rect x="438" y="225" width="1" height="4" fill="#f00"/><rect x="438" y="229" width="1" height="1" fill="#00f"/><rect x="438" y="328" width="1" height="4" fill="#f00"/><rect x="438" y="327" width="1" height="1" fill="#00f"/><rect x="437" y="357" width="1" height="9" fill="#9a9a9a"/><rect x="438" y="365" width="1" height="4" fill="#f00"/><rect x="438" y="369" width="1" height="1" fill="#00f"/><rect x="438" y="488" width="1" height="4" fill="#f00"/><rect x="438" y="487" width="1" height="1" fill="#00f"/><rect x="437" y="517" width="1" height="9" fill="#9a9a9a"/><rect x="438" y="525" width="1" height="4" fill="#f00"/><rect x="438" y="529" width="1" height="1" fill="#00f"/><rect x="438" y="648" width="1" height="4" fill="#f00"/><rect x="438" y="647" width="1" height="1" fill="#00f"/><rect x="437" y="677" width="1" height="9" fill="#9a9a9a"/><rect x="438" y="685" width="1" height="4" fill="#f00"/><rect x="438" y="689" width="1" height="1" fill="#00f"/><rect x="498" y="188" width="1" height="4" fill="#f00"/><rect x="498" y="187" width="1" height="1" fill="#00f"/><rect x="497" y="217" width="1" height="9" fill="#9a9a9a"/><rect x="498" y="225" width="1" height="4" fill="#f00"/><rect x="498" y="229" width="1" height="1" fill="#00f"/><rect x="498" y="328" width="1" height="4" fill="#f00"/><rect x="498" y="327" width="1" height="1" fill="#00f"/><rect x="497" y="357" width="1" height="9" fill="#9a9a9a"/><rect x="498" y="365" width="1" height="4" fill="#f00"/><rect x="498" y="369" width="1" height="1" fill="#00f"/><rect x="498" y="488" width="1" height="4" fill="#f00"/><rect x="498" y="487" width="1" height="1" fill="#00f"/><rect x="497" y="517" width="1" height="9" fill="#9a9a9a"/><rect x="498" y="525" width="1" height="4" fill="#f00"/><rect x="498" y="529" width="1" height="1" fill="#00f"/><rect x="498" y="648" width="1" height="4" fill="#f00"/><rect x="498" y="647" width="1" height="1" fill="#00f"/><rect x="497" y="677" width="1" height="9" fill="#9a9a9a"/><rect x="498" y="685" width="1" height="4" fill="#f00"/><rect x="498" y="689" width="1" height="1" fill="#00f"/><rect x="558" y="188" width="1" height="4" fill="#f00"/><rect x="558" y="187" width="1" height="1" fill="#00f"/><rect x="557" y="217" width="1" height="9" fill="#9a9a9a"/><rect x="558" y="225" width="1" height="4" fill="#f00"/><rect x="558" y="229" width="1" height="1" fill="#00f"/><rect x="558" y="328" width="1" height="4" fill="#f00"/><rect x="558" y="327" width="1" height="1" fill="#00f"/><rect x="557" y="357" width="1" height="9" fill="#9a9a9a"/><rect x="558" y="365" width="1" height="4" fill="#f00"/><rect x="558" y="369" width="1" height="1" fill="#00f"/><rect x="558" y="488" width="1" height="4" fill="#f00"/><rect x="558" y="487" width="1" height="1" fill="#00f"/><rect x="557" y="517" width="1" height="9" fill="#9a9a9a"/><rect x="558" y="525" width="1" height="4" fill="#f00"/><rect x="558" y="529" width="1" height="1" fill="#00f"/><rect x="558" y="648" width="1" height="4" fill="#f00"/><rect x="558" y="647" width="1" height="1" fill="#00f"/><rect x="557" y="677" width="1" height="9" fill="#9a9a9a"/><rect x="558" y="685" width="1" height="4" fill="#f00"/><rect x="558" y="689" width="1" height="1" fill="#00f"/><rect x="618" y="188" width="1" height="4" fill="#f00"/><rect x="618" y="187" width="1" height="1" fill="#00f"/><rect x="617" y="217" width="1" height="9" fill="#9a9a9a"/><rect x="618" y="225" width="1" height="4" fill="#f00"/><rect x="618" y="229" width="1" height="1" fill="#00f"/><rect x="618" y="328" width="1" height="4" fill="#f00"/><rect x="618" y="327" width="1" height="1" fill="#00f"/><rect x="617" y="357" width="1" height="9" fill="#9a9a9a"/><rect x="618" y="365" width="1" height="4" fill="#f00"/><rect x="618" y="369" width="1" height="1" fill="#00f"/><rect x="618" y="488" width="1" height="4" fill="#f00"/><rect x="618" y="487" width="1" height="1" fill="#00f"/><rect x="617" y="517" width="1" height="9" fill="#9a9a9a"/><rect x="618" y="525" width="1" height="4" fill="#f00"/><rect x="618" y="529" width="1" height="1" fill="#00f"/><rect x="618" y="648" width="1" height="4" fill="#f00"/><rect x="618" y="647" width="1" height="1" fill="#00f"/><rect x="617" y="677" width="1" height="9" fill="#9a9a9a"/><rect x="618" y="685" width="1" height="4" fill="#f00"/><rect x="618" y="689" width="1" height="1" fill="#00f"/><rect x="678" y="188" width="1" height="4" fill="#f00"/><rect x="678" y="187" width="1" height="1" fill="#00f"/><rect x="677" y="217" width="1" height="9" fill="#9a9a9a"/><rect x="678" y="225" width="1" height="4" fill="#f00"/><rect x="678" y="229" width="1" height="1" fill="#00f"/><rect x="678" y="328" width="1" height="4" fill="#f00"/><rect x="678" y="327" width="1" height="1" fill="#00f"/><rect x="677" y="357" width="1" height="9" fill="#9a9a9a"/><rect x="678" y="365" width="1" height="4" fill="#f00"/><rect x="678" y="369" width="1" height="1" fill="#00f"/><rect x="678" y="488" width="1" height="4" fill="#f00"/><rect x="678" y="487" width="1" height="1" fill="#00f"/><rect x="677" y="517" width="1" height="9" fill="#9a9a9a"/><rect x="678" y="525" width="1" height="4" fill="#f00"/><rect x="678" y="529" width="1" height="1" fill="#00f"/><rect x="678" y="648" width="1" height="4" fill="#f00"/><rect x="678" y="647" width="1" height="1" fill="#00f"/><rect x="677" y="677" width="1" height="9" fill="#9a9a9a"/><rect x="678" y="685" width="1" height="4" fill="#f00"/><rect x="678" y="689" width="1" height="1" fill="#00f"/><rect x="738" y="188" width="1" height="4" fill="#f00"/><rect x="738" y="187" width="1" height="1" fill="#00f"/><rect x="737" y="217" width="1" height="9" fill="#9a9a9a"/><rect x="738" y="225" width="1" height="4" fill="#f00"/><rect x="738" y="229" width="1" height="1" fill="#00f"/><rect x="738" y="328" width="1" height="4" fill="#f00"/><rect x="738" y="327" width="1" height="1" fill="#00f"/><rect x="737" y="357" width="1" height="9" fill="#9a9a9a"/><rect x="738" y="365" width="1" height="4" fill="#f00"/><rect x="738" y="369" width="1" height="1" fill="#00f"/><rect x="738" y="488" width="1" height="4" fill="#f00"/><rect x="738" y="487" width="1" height="1" fill="#00f"/><rect x="737" y="517" width="1" height="9" fill="#9a9a9a"/><rect x="738" y="525" width="1" height="4" fill="#f00"/><rect x="738" y="529" width="1" height="1" fill="#00f"/><rect x="738" y="648" width="1" height="4" fill="#f00"/><rect x="738" y="647" width="1" height="1" fill="#00f"/><rect x="737" y="677" width="1" height="9" fill="#9a9a9a"/><rect x="738" y="685" width="1" height="4" fill="#f00"/><rect x="738" y="689" width="1" height="1" fill="#00f"/><rect x="798" y="188" width="1" height="4" fill="#f00"/><rect x="798" y="187" width="1" height="1" fill="#00f"/><rect x="797" y="217" width="1" height="9" fill="#9a9a9a"/><rect x="798" y="225" width="1" height="4" fill="#f00"/><rect x="798" y="229" width="1" height="1" fill="#00f"/><rect x="798" y="328" width="1" height="4" fill="#f00"/><rect x="798" y="327" width="1" height="1" fill="#00f"/><rect x="797" y="357" width="1" height="9" fill="#9a9a9a"/><rect x="798" y="365" width="1" height="4" fill="#f00"/><rect x="798" y="369" width="1" height="1" fill="#00f"/><rect x="798" y="488" width="1" height="4" fill="#f00"/><rect x="798" y="487" width="1" height="1" fill="#00f"/><rect x="797" y="517" width="1" height="9" fill="#9a9a9a"/><rect x="798" y="525" width="1" height="4" fill="#f00"/><rect x="798" y="529" width="1" height="1" fill="#00f"/><rect x="798" y="648" width="1" height="4" fill="#f00"/><rect x="798" y="647" width="1" height="1" fill="#00f"/><rect x="797" y="677" width="1" height="9" fill="#9a9a9a"/><rect x="798" y="685" width="1" height="4" fill="#f00"/><rect x="798" y="689" width="1" height="1" fill="#00f"/><rect x="858" y="188" width="1" height="4" fill="#f00"/><rect x="858" y="187" width="1" height="1" fill="#00f"/><rect x="857" y="217" width="1" height="9" fill="#9a9a9a"/><rect x="858" y="225" width="1" height="4" fill="#f00"/><rect x="858" y="229" width="1" height="1" fill="#00f"/><rect x="858" y="328" width="1" height="4" fill="#f00"/><rect x="858" y="327" width="1" height="1" fill="#00f"/><rect x="857" y="357" width="1" height="9" fill="#9a9a9a"/><rect x="858" y="365" width="1" height="4" fill="#f00"/><rect x="858" y="369" width="1" height="1" fill="#00f"/><rect x="858" y="488" width="1" height="4" fill="#f00"/><rect x="858" y="487" width="1" height="1" fill="#00f"/><rect x="857" y="517" width="1" height="9" fill="#9a9a9a"/><rect x="858" y="525" width="1" height="4" fill="#f00"/><rect x="858" y="529" width="1" height="1" fill="#00f"/><rect x="858" y="648" width="1" height="4" fill="#f00"/><rect x="858" y="647" width="1" height="1" fill="#00f"/><rect x="857" y="677" width="1" height="9" fill="#9a9a9a"/><rect x="858" y="685" width="1" height="4" fill="#f00"/><rect x="858" y="689" width="1" height="1" fill="#00f"/><rect x="918" y="188" width="1" height="4" fill="#f00"/><rect x="918" y="187" width="1" height="1" fill="#00f"/><rect x="917" y="217" width="1" height="9" fill="#9a9a9a"/><rect x="918" y="225" width="1" height="4" fill="#f00"/><rect x="918" y="229" width="1" height="1" fill="#00f"/><rect x="918" y="328" width="1" height="4" fill="#f00"/><rect x="918" y="327" width="1" height="1" fill="#00f"/><rect x="917" y="357" width="1" height="9" fill="#9a9a9a"/><rect x="918" y="365" width="1" height="4" fill="#f00"/><rect x="918" y="369" width="1" height="1" fill="#00f"/><rect x="918" y="488" width="1" height="4" fill="#f00"/><rect x="918" y="487" width="1" height="1" fill="#00f"/><rect x="917" y="517" width="1" height="9" fill="#9a9a9a"/><rect x="918" y="525" width="1" height="4" fill="#f00"/><rect x="918" y="529" width="1" height="1" fill="#00f"/><rect x="918" y="648" width="1" height="4" fill="#f00"/><rect x="918" y="647" width="1" height="1" fill="#00f"/><rect x="917" y="677" width="1" height="9" fill="#9a9a9a"/><rect x="918" y="685" width="1" height="4" fill="#f00"/><rect x="918" y="689" width="1" height="1" fill="#00f"/><rect x="978" y="188" width="1" height="4" fill="#f00"/><rect x="978" y="187" width="1" height="1" fill="#00f"/><rect x="977" y="217" width="1" height="9" fill="#9a9a9a"/><rect x="978" y="225" width="1" height="4" fill="#f00"/><rect x="978" y="229" width="1" height="1" fill="#00f"/><rect x="978" y="328" width="1" height="4" fill="#f00"/><rect x="978" y="327" width="1" height="1" fill="#00f"/><rect x="977" y="357" width="1" height="9" fill="#9a9a9a"/><rect x="978" y="365" width="1" height="4" fill="#f00"/><rect x="978" y="369" width="1" height="1" fill="#00f"/><rect x="978" y="488" width="1" height="4" fill="#f00"/><rect x="978" y="487" width="1" height="1" fill="#00f"/><rect x="977" y="517" width="1" height="9" fill="#9a9a9a"/><rect x="978" y="525" width="1" height="4" fill="#f00"/><rect x="978" y="529" width="1" height="1" fill="#00f"/><rect x="978" y="648" width="1" height="4" fill="#f00"/><rect x="978" y="647" width="1" height="1" fill="#00f"/><rect x="977" y="677" width="1" height="9" fill="#9a9a9a"/><rect x="978" y="685" width="1" height="4" fill="#f00"/><rect x="978" y="689" width="1" height="1" fill="#00f"/><rect x="1038" y="188" width="1" height="4" fill="#f00"/><rect x="1038" y="187" width="1" height="1" fill="#00f"/><rect x="1037" y="217" width="1" height="9" fill="#9a9a9a"/><rect x="1038" y="225" width="1" height="4" fill="#f00"/><rect x="1038" y="229" width="1" height="1" fill="#00f"/><rect x="1038" y="328" width="1" height="4" fill="#f00"/><rect x="1038" y="327" width="1" height="1" fill="#00f"/><rect x="1037" y="357" width="1" height="9" fill="#9a9a9a"/><rect x="1038" y="365" width="1" height="4" fill="#f00"/><rect x="1038" y="369" width="1" height="1" fill="#00f"/><rect x="1038" y="488" width="1" height="4" fill="#f00"/><rect x="1038" y="487" width="1" height="1" fill="#00f"/><rect x="1037" y="517" width="1" height="9" fill="#9a9a9a"/><rect x="1038" y="525" width="1" height="4" fill="#f00"/><rect x="1038" y="529" width="1" height="1" fill="#00f"/><rect x="1038" y="648" width="1" height="4" fill="#f00"/><rect x="1038" y="647" width="1" height="1" fill="#00f"/><rect x="1037" y="677" width="1" height="9" fill="#9a9a9a"/><rect x="1038" y="685" width="1" height="4" fill="#f00"/><rect x="1038" y="689" width="1" height="1" fill="#00f"/><rect x="1098" y="188" width="1" height="4" fill="#f00"/><rect x="1098" y="187" width="1" height="1" fill="#00f"/><rect x="1097" y="217" width="1" height="9" fill="#9a9a9a"/><rect x="1098" y="225" width="1" height="4" fill="#f00"/><rect x="1098" y="229" width="1" height="1" fill="#00f"/><rect x="1098" y="328" width="1" height="4" fill="#f00"/><rect x="1098" y="327" width="1" height="1" fill="#00f"/><rect x="1097" y="357" width="1" height="9" fill="#9a9a9a"/><rect x="1098" y="365" width="1" height="4" fill="#f00"/><rect x="1098" y="369" width="1" height="1" fill="#00f"/><rect x="1098" y="488" width="1" height="4" fill="#f00"/><rect x="1098" y="487" width="1" height="1" fill="#00f"/><rect x="1097" y="517" width="1" height="9" fill="#9a9a9a"/><rect x="1098" y="525" width="1" height="4" fill="#f00"/><rect x="1098" y="529" width="1" height="1" fill="#00f"/><rect x="1098" y="648" width="1" height="4" fill="#f00"/><rect x="1098" y="647" width="1" height="1" fill="#00f"/><rect x="1097" y="677" width="1" height="9" fill="#9a9a9a"/><rect x="1098" y="685" width="1" height="4" fill="#f00"/><rect x="1098" y="689" width="1" height="1" fill="#00f"/><rect x="1158" y="188" width="1" height="4" fill="#f00"/><rect x="1158" y="187" width="1" height="1" fill="#00f"/><rect x="1157" y="217" width="1" height="9" fill="#9a9a9a"/><rect x="1158" y="225" width="1" height="4" fill="#f00"/><rect x="1158" y="229" width="1" height="1" fill="#00f"/><rect x="1158" y="328" width="1" height="4" fill="#f00"/><rect x="1158" y="327" width="1" height="1" fill="#00f"/><rect x="1157" y="357" width="1" height="9" fill="#9a9a9a"/><rect x="1158" y="365" width="1" height="4" fill="#f00"/><rect x="1158" y="369" width="1" height="1" fill="#00f"/><rect x="1158" y="488" width="1" height="4" fill="#f00"/><rect x="1158" y="487" width="1" height="1" fill="#00f"/><rect x="1157" y="517" width="1" height="9" fill="#9a9a9a"/><rect x="1158" y="525" width="1" height="4" fill="#f00"/><rect x="1158" y="529" width="1" height="1" fill="#00f"/><rect x="1158" y="648" width="1" height="4" fill="#f00"/><rect x="1158" y="647" width="1" height="1" fill="#00f"/><rect x="1157" y="677" width="1" height="9" fill="#9a9a9a"/><rect x="1158" y="685" width="1" height="4" fill="#f00"/><rect x="1158" y="689" width="1" height="1" fill="#00f"/><rect x="1248" y="188" width="1" height="4" fill="#f00"/><rect x="1248" y="187" width="1" height="1" fill="#00f"/><rect x="1247" y="217" width="1" height="9" fill="#9a9a9a"/><rect x="1248" y="225" width="1" height="4" fill="#f00"/><rect x="1248" y="229" width="1" height="1" fill="#00f"/><rect x="1248" y="328" width="1" height="4" fill="#f00"/><rect x="1248" y="327" width="1" height="1" fill="#00f"/><rect x="1247" y="357" width="1" height="9" fill="#9a9a9a"/><rect x="1248" y="365" width="1" height="4" fill="#f00"/><rect x="1248" y="369" width="1" height="1" fill="#00f"/><rect x="1248" y="488" width="1" height="4" fill="#f00"/><rect x="1248" y="487" width="1" height="1" fill="#00f"/><rect x="1247" y="517" width="1" height="9" fill="#9a9a9a"/><rect x="1248" y="525" width="1" height="4" fill="#f00"/><rect x="1248" y="529" width="1" height="1" fill="#00f"/><rect x="1248" y="648" width="1" height="4" fill="#f00"/><rect x="1248" y="647" width="1" height="1" fill="#00f"/><rect x="1247" y="677" width="1" height="9" fill="#9a9a9a"/><rect x="1248" y="685" width="1" height="4" fill="#f00"/><rect x="1248" y="689" width="1" height="1" fill="#00f"/><rect x="558" y="719" width="1" height="4" fill="#f00"/><rect x="558" y="718" width="1" height="1" fill="#00f"/><rect x="558" y="753" width="1" height="4" fill="#f00"/><rect x="558" y="757" width="1" height="1" fill="#00f"/><rect x="918" y="719" width="1" height="4" fill="#f00"/><rect x="918" y="718" width="1" height="1" fill="#00f"/><rect x="918" y="753" width="1" height="4" fill="#f00"/><rect x="918" y="757" width="1" height="1" fill="#00f"/><rect x="1158" y="719" width="1" height="4" fill="#f00"/><rect x="1158" y="718" width="1" height="1" fill="#00f"/><rect x="1158" y="753" width="1" height="4" fill="#f00"/><rect x="1158" y="757" width="1" height="1" fill="#00f"/><rect x="1248" y="719" width="1" height="4" fill="#f00"/><rect x="1248" y="718" width="1" height="1" fill="#00f"/><rect x="1248" y="753" width="1" height="4" fill="#f00"/><rect x="1248" y="757" width="1" height="1" fill="#00f"/><rect x="346" y="178" width="1" height="1" fill="#f00"/><rect x="347" y="178" width="1" height="1" fill="#f00"/><rect x="348" y="178" width="1" height="1" fill="#f00"/><rect x="346" y="768" width="1" height="1" fill="#f00"/><rect x="347" y="768" width="1" height="1" fill="#f00"/><rect x="348" y="768" width="1" height="1" fill="#f00"/><g font-family="Liberation Sans" fill="#000"><text x="343" y="147" font-size="12" text-anchor="middle">1</text><text x="403" y="147" font-size="12" text-anchor="middle">2</text><text x="463" y="147" font-size="12" text-anchor="middle">3</text><text x="523" y="147" font-size="12" text-anchor="middle">4</text><text x="583" y="147" font-size="12" text-anchor="middle">5</text><text x="643" y="147" font-size="12" text-anchor="middle">6</text><text x="703" y="147" font-size="12" text-anchor="middle">7</text><text x="763" y="147" font-size="12" text-anchor="middle">8</text><text x="823" y="147" font-size="12" text-anchor="middle">9</text><text x="883" y="147" font-size="12" text-anchor="middle">10</text><text x="943" y="147" font-size="12" text-anchor="middle">11</text><text x="1003" y="147" font-size="12" text-anchor="middle">12</text><text x="1063" y="147" font-size="12" text-anchor="middle">13</text><text x="1123" y="147" font-size="12" text-anchor="middle">14</text><text x="1183" y="147" font-size="12" text-anchor="middle">15</text><text x="1243" y="147" font-size="12" text-anchor="middle">16</text><text x="1303" y="147" font-size="12" text-anchor="middle">17</text><text x="303.5" y="198" font-size="12" text-anchor="middle">A</text><text x="303.5" y="278" font-size="12" text-anchor="middle">B</text><text x="303.5" y="358" font-size="12" text-anchor="middle">C</text><text x="303.5" y="438" font-size="12" text-anchor="middle">D</text><text x="303.5" y="518" font-size="12" text-anchor="middle">E</text><text x="303.5" y="598" font-size="12" text-anchor="middle">F</text><text x="303.5" y="678" font-size="12" text-anchor="middle">G</text><text x="303.5" y="758" font-size="12" text-anchor="middle">H</text><text x="297" y="810" font-size="13.5" text-anchor="start">Author: B.Ansieau</text><text x="297" y="835" font-size="13.5" text-anchor="start">Date: 13/04/2009</text><text x="813" y="822" font-size="13.5" text-anchor="middle">Conversion</text><text x="1106" y="810" font-size="13.5" text-anchor="start">File: convertiseur.qet</text><text x="1106" y="835" font-size="13.5" text-anchor="start">Folio: 5/7</text><text x="385.5" y="215" font-size="12" text-anchor="start">KA1-1</text><text x="388" y="355" font-size="12" text-anchor="start">KA2-1</text><text x="388" y="515" font-size="12" text-anchor="start">KA3-1</text><text x="388" y="675" font-size="12" text-anchor="start">KA4-1</text><text x="448" y="215" font-size="12" text-anchor="start">KA1-1</text><text x="445.5" y="355" font-size="12" text-anchor="start">KA2-1</text><text x="448" y="515" font-size="12" text-anchor="start">KA3-1</text><text x="448" y="675" font-size="12" text-anchor="start">KA4-1</text><text x="508" y="215" font-size="12" text-anchor="start">KA1-1</text><text x="508" y="355" font-size="12" text-anchor="start">KA2-1</text><text x="505.5" y="515" font-size="12" text-anchor="start">KA3-1</text><text x="508" y="675" font-size="12" text-anchor="start">KA4-1</text><text x="568" y="215" font-size="12" text-anchor="start">KA1-1</text><text x="568" y="355" font-size="12" text-anchor="start">KA2-1</text><text x="568" y="515" font-size="12" text-anchor="start">KA3-1</text><text x="565.5" y="675" font-size="12" text-anchor="start">KA4-1</text><text x="625.5" y="215" font-size="12" text-anchor="start">KA1-2</text><text x="625.5" y="355" font-size="12" text-anchor="start">KA2-2</text><text x="628" y="515" font-size="12" text-anchor="start">KA3-2</text><text x="628" y="675" font-size="12" text-anchor="start">KA4-2</text><text x="685.5" y="215" font-size="12" text-anchor="start">KA1-2</text><text x="688" y="355" font-size="12" text-anchor="start">KA2-2</text><text x="685.5" y="515" font-size="12" text-anchor="start">KA3-2</text><text x="688" y="675" font-size="12" text-anchor="start">KA4-2</text><text x="745.5" y="215" font-size="12" text-anchor="start">KA1-2</text><text x="748" y="355" font-size="12" text-anchor="start">KA2-2</text><text x="748" y="515" font-size="12" text-anchor="start">KA3-2</text><text x="745.5" y="675" font-size="12" text-anchor="start">KA4-2</text><text x="808" y="215" font-size="12" text-anchor="start">KA1-2</text><text x="805.5" y="355" font-size="12" text-anchor="start">KA2-2</text><text x="805.5" y="515" font-size="12" text-anchor="start">KA3-2</text><text x="808" y="675" font-size="12" text-anchor="start">KA4-2</text><text x="868" y="215" font-size="12" text-anchor="start">KA1-3</text><text x="865.5" y="355" font-size="12" text-anchor="start">KA2-3</text><text x="868" y="515" font-size="12" text-anchor="start">KA3-3</text><text x="865.5" y="675" font-size="12" text-anchor="start">KA4-3</text><text x="928" y="215" font-size="12" text-anchor="start">KA1-3</text><text x="928" y="355" font-size="12" text-anchor="start">KA2-3</text><text x="925.5" y="515" font-size="12" text-anchor="start">KA3-3</text><text x="925.5" y="675" font-size="12" text-anchor="start">KA4-3</text><text x="985.5" y="215" font-size="12" text-anchor="start">KA1-3</text><text x="985.5" y="355" font-size="12" text-anchor="start">KA2-3</text><text x="985.5" y="515" font-size="12" text-anchor="start">KA3-3</text><text x="988" y="675" font-size="12" text-anchor="start">KA4-3</text><text x="1045.5" y="215" font-size="12" text-anchor="start">KA1-3</text><text x="1045.5" y="355" font-size="12" text-anchor="start">KA2-3</text><text x="1048" y="515" font-size="12" text-anchor="start">KA3-3</text><text x="1045.5" y="675" font-size="12" text-anchor="start">KA4-3</text><text x="1105.5" y="215" font-size="12" text-anchor="start">KA1-4</text><text x="1108" y="355" font-size="12" text-anchor="start">KA2-4</text><text x="1105.5" y="515" font-size="12" text-anchor="start">KA3-4</text><text x="1105.5" y="675" font-size="12" text-anchor="start">KA4-4</text><text x="1168" y="215" font-size="12" text-anchor="start">KA1-4</text><text x="1165.5" y="355" font-size="12" text-anchor="start">KA2-4</text><text x="1165.5" y="515" font-size="12" text-anchor="start">KA3-4</text><text x="1165.5" y="675" font-size="12" text-anchor="start">KA4-4</text><text x="1255.5" y="215" font-size="12" text-anchor="start">KA1-4</text><text x="1255.5" y="355" font-size="12" text-anchor="start">KA2-4</text><text x="1255.5" y="515" font-size="12" text-anchor="start">KA3-4</text><text x="1255.5" y="675" font-size="12" text-anchor="start">KA4-4</text><text x="382" y="274" font-size="12" text-anchor="start" letter-spacing="0.8">100</text><text x="382" y="419" font-size="12" text-anchor="start" letter-spacing="0.8">101</text><text x="382" y="579" font-size="12" text-anchor="start" letter-spacing="0.8">102</text><text x="442" y="274" font-size="12" text-anchor="start" letter-spacing="0.8">110</text><text x="442" y="419" font-size="12" text-anchor="start" letter-spacing="0.8">111</text><text x="442" y="579" font-size="12" text-anchor="start" letter-spacing="0.8">112</text><text x="502" y="274" font-size="12" text-anchor="start" letter-spacing="0.8">120</text><text x="502" y="419" font-size="12" text-anchor="start" letter-spacing="0.8">121</text><text x="502" y="579" font-size="12" text-anchor="start" letter-spacing="0.8">122</text><text x="562" y="274" font-size="12" text-anchor="start" letter-spacing="0.8">130</text><text x="562" y="419" font-size="12" text-anchor="start" letter-spacing="0.8">131</text><text x="562" y="579" font-size="12" text-anchor="start" letter-spacing="0.8">132</text><text x="622" y="274" font-size="12" text-anchor="start" letter-spacing="0.8">200</text><text x="622" y="419" font-size="12" text-anchor="start" letter-spacing="0.8">201</text><text x="622" y="579" font-size="12" text-anchor="start" letter-spacing="0.8">202</text><text x="682" y="274" font-size="12" text-anchor="start" letter-spacing="0.8">210</text><text x="682" y="419" font-size="12" text-anchor="start" letter-spacing="0.8">211</text><text x="682" y="579" font-size="12" text-anchor="start" letter-spacing="0.8">212</text><text x="742" y="274" font-size="12" text-anchor="start" letter-spacing="0.8">220</text><text x="742" y="419" font-size="12" text-anchor="start" letter-spacing="0.8">221</text><text x="742" y="579" font-size="12" text-anchor="start" letter-spacing="0.8">222</text><text x="802" y="274" font-size="12" text-anchor="start" letter-spacing="0.8">230</text><text x="802" y="419" font-size="12" text-anchor="start" letter-spacing="0.8">231</text><text x="802" y="579" font-size="12" text-anchor="start" letter-spacing="0.8">232</text><text x="862" y="274" font-size="12" text-anchor="start" letter-spacing="0.8">240</text><text x="862" y="419" font-size="12" text-anchor="start" letter-spacing="0.8">241</text><text x="862" y="579" font-size="12" text-anchor="start" letter-spacing="0.8">242</text><text x="922" y="274" font-size="12" text-anchor="start" letter-spacing="0.8">250</text><text x="922" y="419" font-size="12" text-anchor="start" letter-spacing="0.8">251</text><text x="922" y="579" font-size="12" text-anchor="start" letter-spacing="0.8">252</text><text x="982" y="274" font-size="12" text-anchor="start" letter-spacing="0.8">300</text><text x="982" y="419" font-size="12" text-anchor="start" letter-spacing="0.8">301</text><text x="982" y="579" font-size="12" text-anchor="start" letter-spacing="0.8">302</text><text x="1042" y="274" font-size="12" text-anchor="start" letter-spacing="0.8">310</text><text x="1042" y="419" font-size="12" text-anchor="start" letter-spacing="0.8">311</text><text x="1042" y="579" font-size="12" text-anchor="start" letter-spacing="0.8">312</text><text x="1102" y="274" font-size="12" text-anchor="start" letter-spacing="0.8">320</text><text x="1102" y="419" font-size="12" text-anchor="start" letter-spacing="0.8">321</text><text x="1102" y="579" font-size="12" text-anchor="start" letter-spacing="0.8">322</text><text x="1162" y="274" font-size="12" text-anchor="start" letter-spacing="0.8">330</text><text x="1162" y="419" font-size="12" text-anchor="start" letter-spacing="0.8">331</text><text x="1162" y="579" font-size="12" text-anchor="start" letter-spacing="0.8">332</text><text x="1252" y="274" font-size="12" text-anchor="start" letter-spacing="0.8">400</text><text x="1252" y="419" font-size="12" text-anchor="start" letter-spacing="0.8">401</text><text x="1252" y="579" font-size="12" text-anchor="start" letter-spacing="0.8">402</text><text x="413" y="194" font-size="12" text-anchor="start">3</text><text x="473" y="194" font-size="12" text-anchor="start">3</text><text x="533" y="194" font-size="12" text-anchor="start">3</text><text x="593" y="194" font-size="12" text-anchor="start">3</text><text x="653" y="194" font-size="12" text-anchor="start">3</text><text x="713" y="194" font-size="12" text-anchor="start">3</text><text x="773" y="194" font-size="12" text-anchor="start">3</text><text x="833" y="194" font-size="12" text-anchor="start">3</text><text x="893" y="194" font-size="12" text-anchor="start">3</text><text x="953" y="194" font-size="12" text-anchor="start">3</text><text x="1013" y="194" font-size="12" text-anchor="start">3</text><text x="1073" y="194" font-size="12" text-anchor="start">3</text><text x="1133" y="194" font-size="12" text-anchor="start">3</text><text x="1208" y="194" font-size="12" text-anchor="start">3</text><text x="412.5" y="714" font-size="12" text-anchor="start" letter-spacing="0.8">140</text><text x="472.5" y="714" font-size="12" text-anchor="start" letter-spacing="0.8">140</text><text x="532.5" y="714" font-size="12" text-anchor="start" letter-spacing="0.8">140</text><text x="652.5" y="714" font-size="12" text-anchor="start" letter-spacing="0.8">260</text><text x="712.5" y="714" font-size="12" text-anchor="start" letter-spacing="0.8">260</text><text x="772.5" y="714" font-size="12" text-anchor="start" letter-spacing="0.8">260</text><text x="832.5" y="714" font-size="12" text-anchor="start" letter-spacing="0.8">260</text><text x="892.5" y="714" font-size="12" text-anchor="start" letter-spacing="0.8">260</text><text x="1012.5" y="714" font-size="12" text-anchor="start" letter-spacing="0.8">340</text><text x="1072.5" y="714" font-size="12" text-anchor="start" letter-spacing="0.8">340</text><text x="1132.5" y="714" font-size="12" text-anchor="start" letter-spacing="0.8">340</text><text x="1253" y="720" font-size="12" text-anchor="start" letter-spacing="0.8">410</text><text x="592" y="745" font-size="12" text-anchor="start">KA10</text><text x="952" y="745" font-size="12" text-anchor="start">KA01</text><text x="1192" y="745" font-size="12" text-anchor="start">KA11</text><text x="1282" y="745" font-size="12" text-anchor="start">KA001</text><text x="332" y="174" font-size="12" text-anchor="start">2-E7</text><text x="332" y="764" font-size="12" text-anchor="start">2-E7</text><text x="466" y="784" font-size="12" text-anchor="middle">2</text><text x="745" y="784" font-size="12" text-anchor="middle">2</text><text x="1046" y="784" font-size="12" text-anchor="middle">2</text><text x="1211" y="784" font-size="12" text-anchor="middle">2</text></g></svg></div><svg style="left:0;top:0" width="1680" height="100"><rect x="1426" y="85" width="2" height="2" fill="#fff"/><rect x="1425" y="84" width="2" height="2" fill="#c2c2c2"/><rect x="1429" y="88" width="2" height="2" fill="#fff"/><rect x="1428" y="87" width="2" height="2" fill="#c2c2c2"/><rect x="1432" y="85" width="2" height="2" fill="#fff"/><rect x="1431" y="84" width="2" height="2" fill="#c2c2c2"/><rect x="1435" y="88" width="2" height="2" fill="#fff"/><rect x="1434" y="87" width="2" height="2" fill="#c2c2c2"/><rect x="1438" y="85" width="2" height="2" fill="#fff"/><rect x="1437" y="84" width="2" height="2" fill="#c2c2c2"/><rect x="1441" y="88" width="2" height="2" fill="#fff"/><rect x="1440" y="87" width="2" height="2" fill="#c2c2c2"/><rect x="1444" y="85" width="2" height="2" fill="#fff"/><rect x="1443" y="84" width="2" height="2" fill="#c2c2c2"/><rect x="1447" y="88" width="2" height="2" fill="#fff"/><rect x="1446" y="87" width="2" height="2" fill="#c2c2c2"/><rect x="1450" y="85" width="2" height="2" fill="#fff"/><rect x="1449" y="84" width="2" height="2" fill="#c2c2c2"/><rect x="1453" y="88" width="2" height="2" fill="#fff"/><rect x="1452" y="87" width="2" height="2" fill="#c2c2c2"/><rect x="1456" y="85" width="2" height="2" fill="#fff"/><rect x="1455" y="84" width="2" height="2" fill="#c2c2c2"/><rect x="1459" y="88" width="2" height="2" fill="#fff"/><rect x="1458" y="87" width="2" height="2" fill="#c2c2c2"/><rect x="1462" y="85" width="2" height="2" fill="#fff"/><rect x="1461" y="84" width="2" height="2" fill="#c2c2c2"/><rect x="1465" y="88" width="2" height="2" fill="#fff"/><rect x="1464" y="87" width="2" height="2" fill="#c2c2c2"/><rect x="1468" y="85" width="2" height="2" fill="#fff"/><rect x="1467" y="84" width="2" height="2" fill="#c2c2c2"/><rect x="1471" y="88" width="2" height="2" fill="#fff"/><rect x="1470" y="87" width="2" height="2" fill="#c2c2c2"/><rect x="1474" y="85" width="2" height="2" fill="#fff"/><rect x="1473" y="84" width="2" height="2" fill="#c2c2c2"/><rect x="1477" y="88" width="2" height="2" fill="#fff"/><rect x="1476" y="87" width="2" height="2" fill="#c2c2c2"/><rect x="1480" y="85" width="2" height="2" fill="#fff"/><rect x="1479" y="84" width="2" height="2" fill="#c2c2c2"/><rect x="1483" y="88" width="2" height="2" fill="#fff"/><rect x="1482" y="87" width="2" height="2" fill="#c2c2c2"/><rect x="1486" y="85" width="2" height="2" fill="#fff"/><rect x="1485" y="84" width="2" height="2" fill="#c2c2c2"/><rect x="1489" y="88" width="2" height="2" fill="#fff"/><rect x="1488" y="87" width="2" height="2" fill="#c2c2c2"/><rect x="1492" y="85" width="2" height="2" fill="#fff"/><rect x="1491" y="84" width="2" height="2" fill="#c2c2c2"/><rect x="1495" y="88" width="2" height="2" fill="#fff"/><rect x="1494" y="87" width="2" height="2" fill="#c2c2c2"/><rect x="1498" y="85" width="2" height="2" fill="#fff"/><rect x="1497" y="84" width="2" height="2" fill="#c2c2c2"/><rect x="1501" y="88" width="2" height="2" fill="#fff"/><rect x="1500" y="87" width="2" height="2" fill="#c2c2c2"/><rect x="1504" y="85" width="2" height="2" fill="#fff"/><rect x="1503" y="84" width="2" height="2" fill="#c2c2c2"/><rect x="1507" y="88" width="2" height="2" fill="#fff"/><rect x="1506" y="87" width="2" height="2" fill="#c2c2c2"/><rect x="1564" y="85" width="2" height="2" fill="#fff"/><rect x="1563" y="84" width="2" height="2" fill="#c2c2c2"/><rect x="1567" y="88" width="2" height="2" fill="#fff"/><rect x="1566" y="87" width="2" height="2" fill="#c2c2c2"/><rect x="1570" y="85" width="2" height="2" fill="#fff"/><rect x="1569" y="84" width="2" height="2" fill="#c2c2c2"/><rect x="1573" y="88" width="2" height="2" fill="#fff"/><rect x="1572" y="87" width="2" height="2" fill="#c2c2c2"/><rect x="1576" y="85" width="2" height="2" fill="#fff"/><rect x="1575" y="84" width="2" height="2" fill="#c2c2c2"/><rect x="1579" y="88" width="2" height="2" fill="#fff"/><rect x="1578" y="87" width="2" height="2" fill="#c2c2c2"/><rect x="1582" y="85" width="2" height="2" fill="#fff"/><rect x="1581" y="84" width="2" height="2" fill="#c2c2c2"/><rect x="1585" y="88" width="2" height="2" fill="#fff"/><rect x="1584" y="87" width="2" height="2" fill="#c2c2c2"/><rect x="1588" y="85" width="2" height="2" fill="#fff"/><rect x="1587" y="84" width="2" height="2" fill="#c2c2c2"/><rect x="1591" y="88" width="2" height="2" fill="#fff"/><rect x="1590" y="87" width="2" height="2" fill="#c2c2c2"/><rect x="1594" y="85" width="2" height="2" fill="#fff"/><rect x="1593" y="84" width="2" height="2" fill="#c2c2c2"/><rect x="1597" y="88" width="2" height="2" fill="#fff"/><rect x="1596" y="87" width="2" height="2" fill="#c2c2c2"/><rect x="1600" y="85" width="2" height="2" fill="#fff"/><rect x="1599" y="84" width="2" height="2" fill="#c2c2c2"/><rect x="1603" y="88" width="2" height="2" fill="#fff"/><rect x="1602" y="87" width="2" height="2" fill="#c2c2c2"/><rect x="1606" y="85" width="2" height="2" fill="#fff"/><rect x="1605" y="84" width="2" height="2" fill="#c2c2c2"/><rect x="1609" y="88" width="2" height="2" fill="#fff"/><rect x="1608" y="87" width="2" height="2" fill="#c2c2c2"/><rect x="1612" y="85" width="2" height="2" fill="#fff"/><rect x="1611" y="84" width="2" height="2" fill="#c2c2c2"/><rect x="1615" y="88" width="2" height="2" fill="#fff"/><rect x="1614" y="87" width="2" height="2" fill="#c2c2c2"/><rect x="1618" y="85" width="2" height="2" fill="#fff"/><rect x="1617" y="84" width="2" height="2" fill="#c2c2c2"/><rect x="1621" y="88" width="2" height="2" fill="#fff"/><rect x="1620" y="87" width="2" height="2" fill="#c2c2c2"/><rect x="1624" y="85" width="2" height="2" fill="#fff"/><rect x="1623" y="84" width="2" height="2" fill="#c2c2c2"/><rect x="1627" y="88" width="2" height="2" fill="#fff"/><rect x="1626" y="87" width="2" height="2" fill="#c2c2c2"/><rect x="1630" y="85" width="2" height="2" fill="#fff"/><rect x="1629" y="84" width="2" height="2" fill="#c2c2c2"/><rect x="1633" y="88" width="2" height="2" fill="#fff"/><rect x="1632" y="87" width="2" height="2" fill="#c2c2c2"/><rect x="1636" y="85" width="2" height="2" fill="#fff"/><rect x="1635" y="84" width="2" height="2" fill="#c2c2c2"/><rect x="1639" y="88" width="2" height="2" fill="#fff"/><rect x="1638" y="87" width="2" height="2" fill="#c2c2c2"/><rect x="1642" y="85" width="2" height="2" fill="#fff"/><rect x="1641" y="84" width="2" height="2" fill="#c2c2c2"/><rect x="1645" y="88" width="2" height="2" fill="#fff"/><rect x="1644" y="87" width="2" height="2" fill="#c2c2c2"/><g transform="translate(1648,80)"><rect x="0.5" y="0.5" width="13" height="13" rx="2.5" fill="#f4f4f4" stroke="#8a8a8a"/><rect x="5" y="3" width="5" height="4" fill="none" stroke="#000" stroke-width="1.5"/><rect x="3" y="6" width="5" height="4" fill="#f4f4f4" stroke="#000" stroke-width="1.5"/></g><g transform="translate(1663,80)"><rect x="0.5" y="0.5" width="13" height="13" rx="2.5" fill="#f4f4f4" stroke="#8a8a8a"/><path d="M3.5 3.5 L10.5 10.5 M10.5 3.5 L3.5 10.5" stroke="#000" stroke-width="1.6"/></g></svg><div class="t" style="left:1519px;top:79px;font-size:13px;color:#000;font-weight:normal;">Undo</div><svg style="left:1416px;top:393px" width="6" height="313"><rect x="2" y="1" width="2" height="1" fill="#b0b0b0"/><rect x="2" y="2" width="1" height="1" fill="#b0b0b0"/><rect x="4" y="1" width="1" height="2" fill="#fff"/><rect x="2" y="6" width="2" height="1" fill="#b0b0b0"/><rect x="2" y="7" width="1" height="1" fill="#b0b0b0"/><rect x="4" y="6" width="1" height="2" fill="#fff"/><rect x="2" y="11" width="2" height="1" fill="#b0b0b0"/><rect x="2" y="12" width="1" height="1" fill="#b0b0b0"/><rect x="4" y="11" width="1" height="2" fill="#fff"/><rect x="2" y="16" width="2" height="1" fill="#b0b0b0"/><rect x="2" y="17" width="1" height="1" fill="#b0b0b0"/><rect x="4" y="16" width="1" height="2" fill="#fff"/><rect x="2" y="21" width="2" height="1" fill="#b0b0b0"/><rect x="2" y="22" width="1" height="1" fill="#b0b0b0"/><rect x="4" y="21" width="1" height="2" fill="#fff"/><rect x="2" y="26" width="2" height="1" fill="#b0b0b0"/><rect x="2" y="27" width="1" height="1" fill="#b0b0b0"/><rect x="4" y="26" width="1" height="2" fill="#fff"/><rect x="2" y="31" width="2" height="1" fill="#b0b0b0"/><rect x="2" y="32" width="1" height="1" fill="#b0b0b0"/><rect x="4" y="31" width="1" height="2" fill="#fff"/><rect x="2" y="36" width="2" height="1" fill="#b0b0b0"/><rect x="2" y="37" width="1" height="1" fill="#b0b0b0"/><rect x="4" y="36" width="1" height="2" fill="#fff"/><rect x="2" y="41" width="2" height="1" fill="#b0b0b0"/><rect x="2" y="42" width="1" height="1" fill="#b0b0b0"/><rect x="4" y="41" width="1" height="2" fill="#fff"/><rect x="2" y="46" width="2" height="1" fill="#b0b0b0"/><rect x="2" y="47" width="1" height="1" fill="#b0b0b0"/><rect x="4" y="46" width="1" height="2" fill="#fff"/><rect x="2" y="51" width="2" height="1" fill="#b0b0b0"/><rect x="2" y="52" width="1" height="1" fill="#b0b0b0"/><rect x="4" y="51" width="1" height="2" fill="#fff"/><rect x="2" y="56" width="2" height="1" fill="#b0b0b0"/><rect x="2" y="57" width="1" height="1" fill="#b0b0b0"/><rect x="4" y="56" width="1" height="2" fill="#fff"/><rect x="2" y="61" width="2" height="1" fill="#b0b0b0"/><rect x="2" y="62" width="1" height="1" fill="#b0b0b0"/><rect x="4" y="61" width="1" height="2" fill="#fff"/><rect x="2" y="66" width="2" height="1" fill="#b0b0b0"/><rect x="2" y="67" width="1" height="1" fill="#b0b0b0"/><rect x="4" y="66" width="1" height="2" fill="#fff"/><rect x="2" y="71" width="2" height="1" fill="#b0b0b0"/><rect x="2" y="72" width="1" height="1" fill="#b0b0b0"/><rect x="4" y="71" width="1" height="2" fill="#fff"/><rect x="2" y="76" width="2" height="1" fill="#b0b0b0"/><rect x="2" y="77" width="1" height="1" fill="#b0b0b0"/><rect x="4" y="76" width="1" height="2" fill="#fff"/><rect x="2" y="81" width="2" height="1" fill="#b0b0b0"/><rect x="2" y="82" width="1" height="1" fill="#b0b0b0"/><rect x="4" y="81" width="1" height="2" fill="#fff"/><rect x="2" y="86" width="2" height="1" fill="#b0b0b0"/><rect x="2" y="87" width="1" height="1" fill="#b0b0b0"/><rect x="4" y="86" width="1" height="2" fill="#fff"/><rect x="2" y="91" width="2" height="1" fill="#b0b0b0"/><rect x="2" y="92" width="1" height="1" fill="#b0b0b0"/><rect x="4" y="91" width="1" height="2" fill="#fff"/><rect x="2" y="96" width="2" height="1" fill="#b0b0b0"/><rect x="2" y="97" width="1" height="1" fill="#b0b0b0"/><rect x="4" y="96" width="1" height="2" fill="#fff"/><rect x="2" y="101" width="2" height="1" fill="#b0b0b0"/><rect x="2" y="102" width="1" height="1" fill="#b0b0b0"/><rect x="4" y="101" width="1" height="2" fill="#fff"/><rect x="2" y="106" width="2" height="1" fill="#b0b0b0"/><rect x="2" y="107" width="1" height="1" fill="#b0b0b0"/><rect x="4" y="106" width="1" height="2" fill="#fff"/><rect x="2" y="111" width="2" height="1" fill="#b0b0b0"/><rect x="2" y="112" width="1" height="1" fill="#b0b0b0"/><rect x="4" y="111" width="1" height="2" fill="#fff"/><rect x="2" y="116" width="2" height="1" fill="#b0b0b0"/><rect x="2" y="117" width="1" height="1" fill="#b0b0b0"/><rect x="4" y="116" width="1" height="2" fill="#fff"/><rect x="2" y="121" width="2" height="1" fill="#b0b0b0"/><rect x="2" y="122" width="1" height="1" fill="#b0b0b0"/><rect x="4" y="121" width="1" height="2" fill="#fff"/><rect x="2" y="126" width="2" height="1" fill="#b0b0b0"/><rect x="2" y="127" width="1" height="1" fill="#b0b0b0"/><rect x="4" y="126" width="1" height="2" fill="#fff"/><rect x="2" y="131" width="2" height="1" fill="#b0b0b0"/><rect x="2" y="132" width="1" height="1" fill="#b0b0b0"/><rect x="4" y="131" width="1" height="2" fill="#fff"/><rect x="2" y="136" width="2" height="1" fill="#b0b0b0"/><rect x="2" y="137" width="1" height="1" fill="#b0b0b0"/><rect x="4" y="136" width="1" height="2" fill="#fff"/><rect x="2" y="141" width="2" height="1" fill="#b0b0b0"/><rect x="2" y="142" width="1" height="1" fill="#b0b0b0"/><rect x="4" y="141" width="1" height="2" fill="#fff"/><rect x="2" y="146" width="2" height="1" fill="#b0b0b0"/><rect x="2" y="147" width="1" height="1" fill="#b0b0b0"/><rect x="4" y="146" width="1" height="2" fill="#fff"/><rect x="2" y="151" width="2" height="1" fill="#b0b0b0"/><rect x="2" y="152" width="1" height="1" fill="#b0b0b0"/><rect x="4" y="151" width="1" height="2" fill="#fff"/><rect x="2" y="156" width="2" height="1" fill="#b0b0b0"/><rect x="2" y="157" width="1" height="1" fill="#b0b0b0"/><rect x="4" y="156" width="1" height="2" fill="#fff"/><rect x="2" y="161" width="2" height="1" fill="#b0b0b0"/><rect x="2" y="162" width="1" height="1" fill="#b0b0b0"/><rect x="4" y="161" width="1" height="2" fill="#fff"/><rect x="2" y="166" width="2" height="1" fill="#b0b0b0"/><rect x="2" y="167" width="1" height="1" fill="#b0b0b0"/><rect x="4" y="166" width="1" height="2" fill="#fff"/><rect x="2" y="171" width="2" height="1" fill="#b0b0b0"/><rect x="2" y="172" width="1" height="1" fill="#b0b0b0"/><rect x="4" y="171" width="1" height="2" fill="#fff"/><rect x="2" y="176" width="2" height="1" fill="#b0b0b0"/><rect x="2" y="177" width="1" height="1" fill="#b0b0b0"/><rect x="4" y="176" width="1" height="2" fill="#fff"/><rect x="2" y="181" width="2" height="1" fill="#b0b0b0"/><rect x="2" y="182" width="1" height="1" fill="#b0b0b0"/><rect x="4" y="181" width="1" height="2" fill="#fff"/><rect x="2" y="186" width="2" height="1" fill="#b0b0b0"/><rect x="2" y="187" width="1" height="1" fill="#b0b0b0"/><rect x="4" y="186" width="1" height="2" fill="#fff"/><rect x="2" y="191" width="2" height="1" fill="#b0b0b0"/><rect x="2" y="192" width="1" height="1" fill="#b0b0b0"/><rect x="4" y="191" width="1" height="2" fill="#fff"/><rect x="2" y="196" width="2" height="1" fill="#b0b0b0"/><rect x="2" y="197" width="1" height="1" fill="#b0b0b0"/><rect x="4" y="196" width="1" height="2" fill="#fff"/><rect x="2" y="201" width="2" height="1" fill="#b0b0b0"/><rect x="2" y="202" width="1" height="1" fill="#b0b0b0"/><rect x="4" y="201" width="1" height="2" fill="#fff"/><rect x="2" y="206" width="2" height="1" fill="#b0b0b0"/><rect x="2" y="207" width="1" height="1" fill="#b0b0b0"/><rect x="4" y="206" width="1" height="2" fill="#fff"/><rect x="2" y="211" width="2" height="1" fill="#b0b0b0"/><rect x="2" y="212" width="1" height="1" fill="#b0b0b0"/><rect x="4" y="211" width="1" height="2" fill="#fff"/><rect x="2" y="216" width="2" height="1" fill="#b0b0b0"/><rect x="2" y="217" width="1" height="1" fill="#b0b0b0"/><rect x="4" y="216" width="1" height="2" fill="#fff"/><rect x="2" y="221" width="2" height="1" fill="#b0b0b0"/><rect x="2" y="222" width="1" height="1" fill="#b0b0b0"/><rect x="4" y="221" width="1" height="2" fill="#fff"/><rect x="2" y="226" width="2" height="1" fill="#b0b0b0"/><rect x="2" y="227" width="1" height="1" fill="#b0b0b0"/><rect x="4" y="226" width="1" height="2" fill="#fff"/><rect x="2" y="231" width="2" height="1" fill="#b0b0b0"/><rect x="2" y="232" width="1" height="1" fill="#b0b0b0"/><rect x="4" y="231" width="1" height="2" fill="#fff"/><rect x="2" y="236" width="2" height="1" fill="#b0b0b0"/><rect x="2" y="237" width="1" height="1" fill="#b0b0b0"/><rect x="4" y="236" width="1" height="2" fill="#fff"/><rect x="2" y="241" width="2" height="1" fill="#b0b0b0"/><rect x="2" y="242" width="1" height="1" fill="#b0b0b0"/><rect x="4" y="241" width="1" height="2" fill="#fff"/><rect x="2" y="246" width="2" height="1" fill="#b0b0b0"/><rect x="2" y="247" width="1" height="1" fill="#b0b0b0"/><rect x="4" y="246" width="1" height="2" fill="#fff"/><rect x="2" y="251" width="2" height="1" fill="#b0b0b0"/><rect x="2" y="252" width="1" height="1" fill="#b0b0b0"/><rect x="4" y="251" width="1" height="2" fill="#fff"/><rect x="2" y="256" width="2" height="1" fill="#b0b0b0"/><rect x="2" y="257" width="1" height="1" fill="#b0b0b0"/><rect x="4" y="256" width="1" height="2" fill="#fff"/><rect x="2" y="261" width="2" height="1" fill="#b0b0b0"/><rect x="2" y="262" width="1" height="1" fill="#b0b0b0"/><rect x="4" y="261" width="1" height="2" fill="#fff"/><rect x="2" y="266" width="2" height="1" fill="#b0b0b0"/><rect x="2" y="267" width="1" height="1" fill="#b0b0b0"/><rect x="4" y="266" width="1" height="2" fill="#fff"/><rect x="2" y="271" width="2" height="1" fill="#b0b0b0"/><rect x="2" y="272" width="1" height="1" fill="#b0b0b0"/><rect x="4" y="271" width="1" height="2" fill="#fff"/><rect x="2" y="276" width="2" height="1" fill="#b0b0b0"/><rect x="2" y="277" width="1" height="1" fill="#b0b0b0"/><rect x="4" y="276" width="1" height="2" fill="#fff"/><rect x="2" y="281" width="2" height="1" fill="#b0b0b0"/><rect x="2" y="282" width="1" height="1" fill="#b0b0b0"/><rect x="4" y="281" width="1" height="2" fill="#fff"/><rect x="2" y="286" width="2" height="1" fill="#b0b0b0"/><rect x="2" y="287" width="1" height="1" fill="#b0b0b0"/><rect x="4" y="286" width="1" height="2" fill="#fff"/><rect x="2" y="291" width="2" height="1" fill="#b0b0b0"/><rect x="2" y="292" width="1" height="1" fill="#b0b0b0"/><rect x="4" y="291" width="1" height="2" fill="#fff"/><rect x="2" y="296" width="2" height="1" fill="#b0b0b0"/><rect x="2" y="297" width="1" height="1" fill="#b0b0b0"/><rect x="4" y="296" width="1" height="2" fill="#fff"/><rect x="2" y="301" width="2" height="1" fill="#b0b0b0"/><rect x="2" y="302" width="1" height="1" fill="#b0b0b0"/><rect x="4" y="301" width="1" height="2" fill="#fff"/><rect x="2" y="306" width="2" height="1" fill="#b0b0b0"/><rect x="2" y="307" width="1" height="1" fill="#b0b0b0"/><rect x="4" y="306" width="1" height="2" fill="#fff"/><rect x="2" y="311" width="2" height="1" fill="#b0b0b0"/><rect x="2" y="312" width="1" height="1" fill="#b0b0b0"/><rect x="4" y="311" width="1" height="2" fill="#fff"/></svg><div class="a" style="left:1422px;top:98px;width:256px;height:930px;background:#fff;border:1px solid #8c8c8c;border-radius:3px"></div><div class="a" style="left:1424px;top:100px;width:252px;height:15px;background:#6a8fb8"></div><div class="t" style="left:1428px;top:99px;font-size:14px;color:#fff;font-weight:normal;">No modification</div><svg style="left:1660px;top:1030px" width="18" height="18"><path d="M17 5 L5 17 M17 9 L9 17 M17 13 L13 17" stroke="#888" stroke-width="1.2"/><path d="M17 6 L6 17 M17 10 L10 17 M17 14 L14 17" stroke="#fff" stroke-width="0.8"/></svg></body></html>
